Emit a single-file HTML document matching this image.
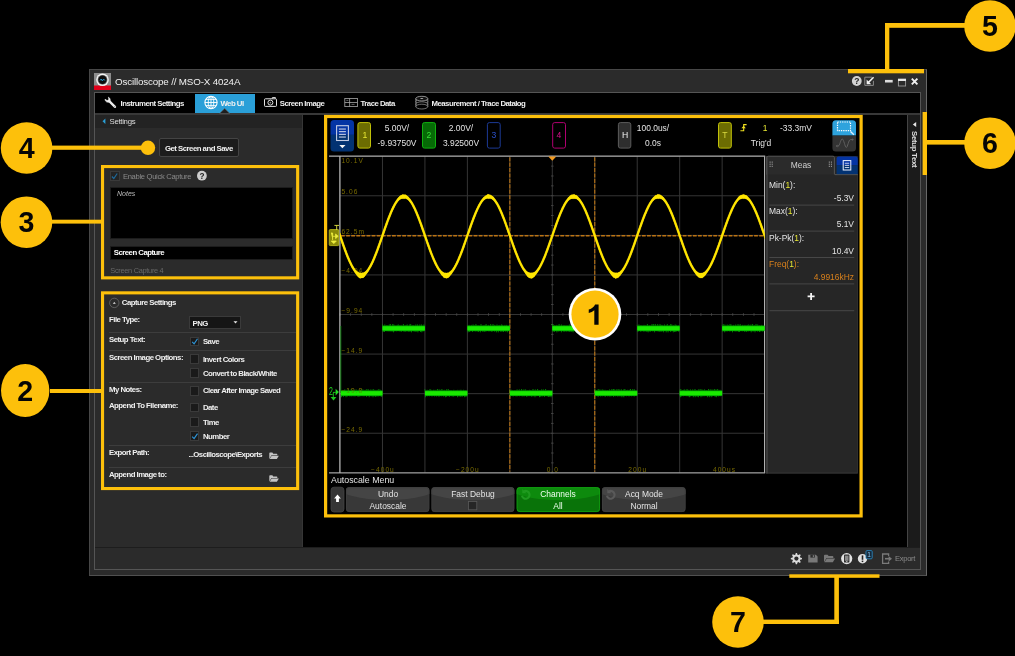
<!DOCTYPE html>
<html><head><meta charset="utf-8"><title>Oscilloscope Web UI</title>
<style>
html,body{margin:0;padding:0;background:#000;}
body{width:1015px;height:656px;position:relative;overflow:hidden;font-family:"Liberation Sans",sans-serif;}
.t{position:absolute;white-space:nowrap;line-height:1;font-family:"Liberation Sans",sans-serif;color:#f0f0f0;}
.b{font-weight:bold;letter-spacing:-0.52px;}
.r{letter-spacing:-0.3px;}
.g{color:#8a8a8a;}
.sc{color:#e0e0e0;}
.cb{position:absolute;width:9.6px;height:9.6px;background:#1a1a1a;border:1px solid #3a3a3a;box-sizing:border-box;}
.sep{position:absolute;height:1px;background:#3d3d3d;left:109px;width:187px;}
svg{position:absolute;left:0;top:0;overflow:visible;}
</style></head><body><div id="root" style="position:absolute;left:0;top:0;width:1015px;height:656px;will-change:transform;">
<div style="position:absolute;left:89px;top:69px;width:838px;height:507px;background:#2b2b2b;border:1px solid #474747;border-right-color:#686868;border-bottom-color:#505050;box-sizing:border-box;"></div>
<div style="position:absolute;left:94px;top:92px;width:827px;height:478px;background:#000;border:1px solid #555;box-sizing:border-box;"></div>
<div style="position:absolute;left:95px;top:113px;width:825px;height:2px;background:#383838;"></div>
<div style="position:absolute;left:95px;top:115px;width:207.6px;height:432px;background:#2b2b2b;border-right:1px solid #363636;box-sizing:border-box;"></div>
<div style="position:absolute;left:95px;top:115px;width:207px;height:12.5px;background:#232323;"></div>
<div style="position:absolute;left:95px;top:547px;width:825px;height:22px;background:#2b2b2b;border-top:1px solid #1d1d1d;box-sizing:border-box;"></div>
<div style="position:absolute;left:907px;top:115px;width:13px;height:432px;background:#1b1b1b;border-left:1px solid #444;box-sizing:border-box;"></div>
<div class="t " style="left:115px;top:77.49px;font-size:9.8px;color:#f0f0f0;letter-spacing:-0.16px;">Oscilloscope // MSO-X 4024A</div>
<svg width="1015" height="656" viewBox="0 0 1015 656">
<rect x="94" y="73" width="17" height="13" fill="#8c8c8c"/>
<rect x="94" y="85.5" width="17" height="4.5" fill="#e2001a"/>
<circle cx="102.5" cy="79.8" r="6.3" fill="#f4f4f4"/>
<circle cx="102.5" cy="79.8" r="4.9" fill="#777"/>
<circle cx="102.5" cy="79.8" r="4.2" fill="#0c0c0c"/>
<path d="M100 80.5 l1.2 -1.5 l1.2 2 l1.2 -2 l1.2 1.5" stroke="#2a9fd8" stroke-width="0.9" fill="none"/>
</svg>
<div style="position:absolute;left:195px;top:94px;width:60px;height:19px;background:#2a9fd8;"></div>
<div class="t b" style="left:120.5px;top:99.57px;font-size:7.8px;">Instrument Settings</div>
<div class="t b" style="left:220.4px;top:99.57px;font-size:7.8px;">Web UI</div>
<div class="t b" style="left:279.8px;top:99.57px;font-size:7.8px;">Screen Image</div>
<div class="t b" style="left:360.5px;top:99.57px;font-size:7.8px;">Trace Data</div>
<div class="t b" style="left:431.5px;top:99.57px;font-size:7.8px;">Measurement / Trace Datalog</div>
<div class="t r" style="left:109.5px;top:117.87px;font-size:7.8px;color:#ddd;">Settings</div>
<div style="position:absolute;left:159px;top:138px;width:80px;height:19px;background:#1c1c1c;border:1px solid #444;border-radius:2px;box-sizing:border-box;"></div>
<div class="t b" style="left:165px;top:144.57px;font-size:7.8px;">Get Screen and Save</div>
<div class="cb" style="left:110px;top:171px;width:10px;height:10px;background:#242424;border-color:#3a3a3a"></div>
<div class="t r g" style="left:122.9px;top:172.66px;font-size:7.6px;">Enable Quick Capture</div>
<div style="position:absolute;left:110px;top:187px;width:183px;height:52px;background:#000;border:1px solid #1c1c1c;box-sizing:border-box;"></div>
<div class="t " style="left:117px;top:189.92px;font-size:7px;font-style:italic;color:#bbb;">Notes</div>
<div style="position:absolute;left:110px;top:245.5px;width:183px;height:14.5px;background:#000;border:1px solid #1c1c1c;box-sizing:border-box;"></div>
<div class="t b" style="left:113.8px;top:249.07px;font-size:7.8px;color:#fff;">Screen Capture</div>
<div class="t r" style="left:110.3px;top:267.24px;font-size:7.4px;color:#686868;">Screen Capture 4</div>
<div class="t b" style="left:121.8px;top:299.27px;font-size:7.8px;">Capture Settings</div>
<div class="t b" style="left:109px;top:316.07px;font-size:7.8px;">File Type:</div>
<div style="position:absolute;left:189px;top:316px;width:52px;height:13px;background:#151515;border:1px solid #3a3a3a;box-sizing:border-box;"></div>
<div class="t b" style="left:192.5px;top:319.57px;font-size:7.8px;letter-spacing:-0.5px">PNG</div>
<div class="sep" style="top:332px"></div>
<div class="t b" style="left:109px;top:336.27px;font-size:7.8px;">Setup Text:</div>
<div class="cb" style="left:189.5px;top:336.5px"></div>
<div class="t b" style="left:202.9px;top:338.07px;font-size:7.8px;">Save</div>
<div class="sep" style="top:350px"></div>
<div class="t b" style="left:109px;top:354.07px;font-size:7.8px;">Screen Image Options:</div>
<div class="cb" style="left:189.5px;top:354px"></div>
<div class="t b" style="left:202.9px;top:355.57px;font-size:7.8px;">Invert Colors</div>
<div class="cb" style="left:189.5px;top:368.3px"></div>
<div class="t b" style="left:202.9px;top:369.87px;font-size:7.8px;">Convert to Black/White</div>
<div class="sep" style="top:381.5px"></div>
<div class="t b" style="left:109px;top:385.57px;font-size:7.8px;">My Notes:</div>
<div class="cb" style="left:189.5px;top:386px"></div>
<div class="t b" style="left:202.9px;top:387.27px;font-size:7.8px;">Clear After Image Saved</div>
<div class="t b" style="left:109px;top:402.07px;font-size:7.8px;">Append To Filename:</div>
<div class="cb" style="left:189.5px;top:402.7px"></div>
<div class="t b" style="left:202.9px;top:404.27px;font-size:7.8px;">Date</div>
<div class="cb" style="left:189.5px;top:417px"></div>
<div class="t b" style="left:202.9px;top:418.57px;font-size:7.8px;">Time</div>
<div class="cb" style="left:189.5px;top:431.3px"></div>
<div class="t b" style="left:202.9px;top:432.77px;font-size:7.8px;">Number</div>
<div class="sep" style="top:444.5px"></div>
<div class="t b" style="left:109px;top:448.57px;font-size:7.8px;">Export Path:</div>
<div class="t b" style="left:188.5px;top:451.27px;font-size:7.8px;letter-spacing:-0.55px">...Oscilloscope\Exports</div>
<div class="sep" style="top:467.3px"></div>
<div class="t b" style="left:109px;top:471.27px;font-size:7.8px;">Append Image to:</div>
<div class="t r" style="left:895px;top:555.36px;font-size:7.6px;color:#8a8a8a;">Export</div>
<div class="t b" style="left:914.3px;top:130.8px;font-size:7.8px;letter-spacing:-0.3px;transform-origin:0 0;transform:rotate(90deg) translateY(-50%);color:#ddd;">Setup Text</div>
<svg width="1015" height="656" viewBox="0 0 1015 656" style="z-index:5">
<g transform="translate(104.4 97)"><path d="M4.6 3.9 L10.6 9.9" stroke="#ececec" stroke-width="2.3" stroke-linecap="round"/><path d="M0.6 2.2 a3 3 0 0 0 4.6 2.6 a3 3 0 0 0 -1.2 -4.6 l0.5 2.2 l-1.7 1.2 z" fill="#ececec" stroke="#ececec" stroke-width="0.6" stroke-linejoin="round"/><circle cx="10.4" cy="9.7" r="0.5" fill="#555"/></g>
<path d="M219.6 113.5 L224.7 108.6 L229.8 113.5 z" fill="#1e1e1e" stroke="#5a5a5a" stroke-width="0.7"/>
<circle cx="211" cy="102.5" r="6.1" fill="#2a9fd6" stroke="#fff" stroke-width="1.1"/>
<ellipse cx="211" cy="102.5" rx="2.8" ry="6.1" fill="none" stroke="#fff" stroke-width="0.9"/>
<path d="M211 96.4 v12.2 M204.9 102.5 h12.2 M205.8 99.4 h10.4 M205.8 105.6 h10.4" stroke="#fff" stroke-width="0.9" fill="none"/>
<rect x="264.5" y="98.8" width="12" height="7.6" rx="0.8" fill="none" stroke="#e4e4e4" stroke-width="1"/><circle cx="270.4" cy="102.6" r="2.5" fill="none" stroke="#e4e4e4" stroke-width="1"/><circle cx="270.4" cy="102.6" r="0.9" fill="#8a8a8a"/><path d="M272.4 98.6 v-1.1 h3 v1.1" fill="none" stroke="#e4e4e4" stroke-width="0.9"/>
<rect x="344.8" y="98.4" width="12.6" height="8.2" fill="none" stroke="#a8a8a8" stroke-width="0.8"/><path d="M344.8 102.5 h12.6 M349.6 98.4 v8.2" stroke="#a8a8a8" stroke-width="0.8"/><path d="M346.3 100.4 h2 M351.5 104.4 h3" stroke="#8a8a8a" stroke-width="0.7"/>
<ellipse cx="421.8" cy="99" rx="6" ry="2.4" fill="#000" stroke="#8c8c8c" stroke-width="0.8"/>
<ellipse cx="421.8" cy="101.6" rx="6" ry="2.4" fill="#000" stroke="#8c8c8c" stroke-width="0.8"/>
<ellipse cx="421.8" cy="104.2" rx="6" ry="2.4" fill="#000" stroke="#8c8c8c" stroke-width="0.8"/>
<ellipse cx="421.8" cy="106.6" rx="6" ry="2.4" fill="#000" stroke="#8c8c8c" stroke-width="0.8"/>
<ellipse cx="421.8" cy="98.6" rx="6" ry="2.3" fill="#111" stroke="#a0a0a0" stroke-width="0.8"/><ellipse cx="421.8" cy="98.5" rx="1.6" ry="0.6" fill="#aaa"/>
<path d="M415.8 98.8 v8 M427.8 98.8 v8" stroke="#8c8c8c" stroke-width="0.8"/>
<circle cx="856.8" cy="81" r="4.9" fill="#d2d2d2"/><text x="856.8" y="84.06" text-anchor="middle" font-family="Liberation Sans, sans-serif" font-weight="bold" font-size="8.5" fill="#222">?</text>
<path d="M872 77.2 h-7.2 v8.2 h8.6 v-4.6" fill="none" stroke="#8a8a8a" stroke-width="1"/><path d="M873.6 77.2 l-5.4 5.4" stroke="#f0f0f0" stroke-width="1.5"/><path d="M866.6 79.6 v4.6 h4.6 z" fill="#f0f0f0"/>
<rect x="885" y="79.9" width="7.7" height="2.6" fill="#dcdcdc"/>
<rect x="898.4" y="79.2" width="7.2" height="6.8" fill="none" stroke="#9a9a9a" stroke-width="0.9"/><rect x="898" y="78.8" width="8" height="2.2" fill="#e6e6e6"/>
<path d="M911.8 78.6 l5.6 5.8 M917.4 78.6 l-5.6 5.8" stroke="#efefef" stroke-width="1.9"/>
<path d="M105.4 118.5 v5.4 l-2.9 -2.7 z" fill="#2a9fd6"/>
<circle cx="201.9" cy="175.7" r="4.9" fill="#cdcdcd"/><text x="201.9" y="178.65" text-anchor="middle" font-family="Liberation Sans, sans-serif" font-weight="bold" font-size="8.2" fill="#222">?</text>
<path d="M111.9 176.5 l1.9 2 l3.4 -5" fill="none" stroke="#1e6a9c" stroke-width="1.15"/>
<path d="M192.2 341.8 l1.9 2 l3.4 -5" fill="none" stroke="#2d95d8" stroke-width="1.15"/>
<path d="M192.2 436.59999999999997 l1.9 2 l3.4 -5" fill="none" stroke="#2d95d8" stroke-width="1.15"/>
<circle cx="114.3" cy="302.9" r="4.7" fill="none" stroke="#6a6a6a" stroke-width="0.8"/><path d="M112.8 303.8 h3 l-1.5 -1.8 z" fill="#e8e8e8"/>
<path d="M233.5 321.2 h4 l-2 2.2 z" fill="#e8e8e8"/>
<g transform="translate(269.3 452.6) scale(0.9)"><path d="M0 7 V0.8 q0 -0.8 0.8 -0.8 h2.6 l1 1.2 h3.8 q0.7 0 0.7 0.8 v1 H2.4 z" fill="#c4c4c4"/><path d="M0.4 7.2 L2.6 3.6 h8 l-2.2 3.6 z" fill="#c4c4c4"/></g>
<g transform="translate(269.3 475.3) scale(0.9)"><path d="M0 7 V0.8 q0 -0.8 0.8 -0.8 h2.6 l1 1.2 h3.8 q0.7 0 0.7 0.8 v1 H2.4 z" fill="#c4c4c4"/><path d="M0.4 7.2 L2.6 3.6 h8 l-2.2 3.6 z" fill="#c4c4c4"/></g>
<path d="M801.97 557.99 L801.97 559.21 L800.24 559.72 L799.91 560.53 L800.77 562.10 L799.90 562.97 L798.33 562.11 L797.52 562.44 L797.01 564.17 L795.79 564.17 L795.28 562.44 L794.47 562.11 L792.90 562.97 L792.03 562.10 L792.89 560.53 L792.56 559.72 L790.83 559.21 L790.83 557.99 L792.56 557.48 L792.89 556.67 L792.03 555.10 L792.90 554.23 L794.47 555.09 L795.28 554.76 L795.79 553.03 L797.01 553.03 L797.52 554.76 L798.33 555.09 L799.90 554.23 L800.77 555.10 L799.91 556.67 L800.24 557.48 z" fill="#dadada"/><circle cx="796.4" cy="558.6" r="2.1" fill="#2b2b2b"/>
<path d="M808.2 554.8 h7.6 l1.8 1.8 v5.8 h-9.4 z" fill="#787878"/><rect x="810.4" y="554.8" width="4.4" height="2.8" fill="#2b2b2b"/><rect x="812.8" y="555.2" width="1.2" height="2" fill="#787878"/>
<g transform="translate(824 554.8) scale(1.05)"><path d="M0 7 V0.8 q0 -0.8 0.8 -0.8 h2.6 l1 1.2 h3.8 q0.7 0 0.7 0.8 v1 H2.4 z" fill="#787878"/><path d="M0.4 7.2 L2.6 3.6 h8 l-2.2 3.6 z" fill="#787878"/></g>
<circle cx="846.7" cy="558.6" r="5.6" fill="#e2e2e2"/><rect x="844" y="554.6" width="5.4" height="8" rx="0.9" fill="#2b2b2b"/><rect x="844.9" y="555.6" width="3.6" height="5.2" fill="#8a8a8a"/><rect x="845.9" y="561.3" width="1.6" height="0.7" fill="#ddd"/>
<circle cx="862.5" cy="558.7" r="4.7" fill="#e2e2e2"/><rect x="861.7" y="555.4" width="1.6" height="4.4" fill="#222"/><rect x="861.7" y="560.6" width="1.6" height="1.5" fill="#222"/>
<rect x="866" y="550.6" width="6.2" height="8.2" rx="1" fill="#15283a" stroke="#2a86bc" stroke-width="0.9"/><text x="869.1" y="557.2" text-anchor="middle" font-family="Liberation Sans, sans-serif" font-size="6.5" fill="#8cc8f0">1</text>
<path d="M888.6 556 v-2 h-6 v9.4 h6 v-2" fill="none" stroke="#7a7a7a" stroke-width="1.3"/><path d="M885 558.7 h4.2" stroke="#7a7a7a" stroke-width="1.6"/><path d="M888.6 556 l3.4 2.7 l-3.4 2.7 z" fill="#7a7a7a"/>
<path d="M916.2 121.9 v5 l-3.4 -2.5 z" fill="#e6e6e6"/>
</svg>
<svg width="1015" height="656" viewBox="0 0 1015 656">
<rect x="327" y="117.5" width="533.5" height="397" fill="#000"/>
<defs><clipPath id="cm"><rect x="330.5" y="120" width="23.5" height="31.6" rx="3.5"/></clipPath><clipPath id="cr"><rect x="832.4" y="120.3" width="23.6" height="31.3" rx="3.5"/></clipPath></defs>
<g clip-path="url(#cm)"><rect x="330" y="119" width="25" height="15.9" fill="#0434a4"/><rect x="330" y="134.9" width="25" height="17.5" fill="#023272"/></g>
<rect x="336.6" y="125.7" width="11.8" height="14.8" fill="none" stroke="#c4cce4" stroke-width="1.1"/>
<rect x="338.9" y="128.5" width="7" height="1.1" fill="#c8d0e8"/>
<rect x="338.9" y="131.1" width="7" height="1.1" fill="#c8d0e8"/>
<rect x="338.9" y="133.8" width="7" height="1.1" fill="#c8d0e8"/>
<rect x="338.9" y="136.5" width="7" height="1.1" fill="#c8d0e8"/>
<path d="M339.3 145 h6.2 l-3.1 3.3 z" fill="#f4f4f4"/>
<rect x="357.9" y="122.6" width="12.600000000000023" height="25.5" rx="2" fill="#6c6c02" stroke="#c0c008" stroke-width="1"/>
<rect x="422.5" y="122.6" width="13.0" height="25.5" rx="2" fill="#066a06" stroke="#10b010" stroke-width="1"/>
<rect x="487.4" y="122.6" width="12.800000000000011" height="25.5" rx="2" fill="#000" stroke="#1c3a96" stroke-width="1"/>
<rect x="552.6999999999999" y="122.6" width="12.800000000000068" height="25.5" rx="2" fill="#000" stroke="#b00070" stroke-width="1"/>
<rect x="618.4" y="122.6" width="12.399999999999977" height="25.5" rx="2" fill="#2e2e2e" stroke="#5c5c5c" stroke-width="1"/>
<rect x="718.5" y="122.6" width="12.799999999999955" height="25.5" rx="2" fill="#6c6c02" stroke="#c0c008" stroke-width="1"/>
<path d="M740.4 130.8 h3.3 v-6.2 h2.9" fill="none" stroke="#f0e020" stroke-width="1.1"/><path d="M741.4 128.3 h4.4 l-2.2 -2.6 z" fill="#f0e020"/>
<g clip-path="url(#cr)"><rect x="832" y="120" width="25" height="15.6" fill="#2ea3dd"/><rect x="832" y="135.6" width="25" height="17" fill="#333"/></g>
<rect x="837.5" y="122" width="13" height="8.6" fill="none" stroke="#fff" stroke-width="1.2" stroke-dasharray="1.3 1"/>
<path d="M850.5 131.5 l3.4 3.2" stroke="#dfefff" stroke-width="1.4"/>
<path d="M838 146 C840 146 840.6 139 842.2 139 S845 147.5 846.3 147.5 S848.6 139.6 850.4 139.6 M850.4 139.6 h2.6 M836.6 146 h2" fill="none" stroke="#606060" stroke-width="1"/><path d="M852.2 138.2 l1.6 1.4 l-1.6 1.4 z M837.4 144.6 l-1.6 1.4 l1.6 1.4 z" fill="#606060"/>
<rect x="381.96" y="156.2" width="1" height="316.6" fill="#353535"/>
<rect x="424.42" y="156.2" width="1" height="316.6" fill="#353535"/>
<rect x="466.88" y="156.2" width="1" height="316.6" fill="#353535"/>
<rect x="509.34" y="156.2" width="1" height="316.6" fill="#353535"/>
<rect x="551.80" y="156.2" width="1" height="316.6" fill="#353535"/>
<rect x="594.26" y="156.2" width="1" height="316.6" fill="#353535"/>
<rect x="636.72" y="156.2" width="1" height="316.6" fill="#353535"/>
<rect x="679.18" y="156.2" width="1" height="316.6" fill="#353535"/>
<rect x="721.64" y="156.2" width="1" height="316.6" fill="#353535"/>
<rect x="340.0" y="195.27" width="424.6" height="1" fill="#353535"/>
<rect x="340.0" y="234.85" width="424.6" height="1" fill="#353535"/>
<rect x="340.0" y="274.43" width="424.6" height="1" fill="#353535"/>
<rect x="340.0" y="314.00" width="424.6" height="1" fill="#353535"/>
<rect x="340.0" y="353.57" width="424.6" height="1" fill="#353535"/>
<rect x="340.0" y="393.15" width="424.6" height="1" fill="#353535"/>
<rect x="340.0" y="432.73" width="424.6" height="1" fill="#353535"/>
<rect x="339.60" y="313.20" width="0.8" height="2.6" fill="#4a4a4a"/>
<rect x="350.22" y="313.20" width="0.8" height="2.6" fill="#4a4a4a"/>
<rect x="360.83" y="313.20" width="0.8" height="2.6" fill="#4a4a4a"/>
<rect x="371.45" y="313.20" width="0.8" height="2.6" fill="#4a4a4a"/>
<rect x="382.06" y="313.20" width="0.8" height="2.6" fill="#4a4a4a"/>
<rect x="392.68" y="313.20" width="0.8" height="2.6" fill="#4a4a4a"/>
<rect x="403.29" y="313.20" width="0.8" height="2.6" fill="#4a4a4a"/>
<rect x="413.91" y="313.20" width="0.8" height="2.6" fill="#4a4a4a"/>
<rect x="424.52" y="313.20" width="0.8" height="2.6" fill="#4a4a4a"/>
<rect x="435.13" y="313.20" width="0.8" height="2.6" fill="#4a4a4a"/>
<rect x="445.75" y="313.20" width="0.8" height="2.6" fill="#4a4a4a"/>
<rect x="456.37" y="313.20" width="0.8" height="2.6" fill="#4a4a4a"/>
<rect x="466.98" y="313.20" width="0.8" height="2.6" fill="#4a4a4a"/>
<rect x="477.60" y="313.20" width="0.8" height="2.6" fill="#4a4a4a"/>
<rect x="488.21" y="313.20" width="0.8" height="2.6" fill="#4a4a4a"/>
<rect x="498.83" y="313.20" width="0.8" height="2.6" fill="#4a4a4a"/>
<rect x="509.44" y="313.20" width="0.8" height="2.6" fill="#4a4a4a"/>
<rect x="520.06" y="313.20" width="0.8" height="2.6" fill="#4a4a4a"/>
<rect x="530.67" y="313.20" width="0.8" height="2.6" fill="#4a4a4a"/>
<rect x="541.28" y="313.20" width="0.8" height="2.6" fill="#4a4a4a"/>
<rect x="551.90" y="313.20" width="0.8" height="2.6" fill="#4a4a4a"/>
<rect x="562.51" y="313.20" width="0.8" height="2.6" fill="#4a4a4a"/>
<rect x="573.13" y="313.20" width="0.8" height="2.6" fill="#4a4a4a"/>
<rect x="583.75" y="313.20" width="0.8" height="2.6" fill="#4a4a4a"/>
<rect x="594.36" y="313.20" width="0.8" height="2.6" fill="#4a4a4a"/>
<rect x="604.98" y="313.20" width="0.8" height="2.6" fill="#4a4a4a"/>
<rect x="615.59" y="313.20" width="0.8" height="2.6" fill="#4a4a4a"/>
<rect x="626.21" y="313.20" width="0.8" height="2.6" fill="#4a4a4a"/>
<rect x="636.82" y="313.20" width="0.8" height="2.6" fill="#4a4a4a"/>
<rect x="647.44" y="313.20" width="0.8" height="2.6" fill="#4a4a4a"/>
<rect x="658.05" y="313.20" width="0.8" height="2.6" fill="#4a4a4a"/>
<rect x="668.67" y="313.20" width="0.8" height="2.6" fill="#4a4a4a"/>
<rect x="679.28" y="313.20" width="0.8" height="2.6" fill="#4a4a4a"/>
<rect x="689.90" y="313.20" width="0.8" height="2.6" fill="#4a4a4a"/>
<rect x="700.51" y="313.20" width="0.8" height="2.6" fill="#4a4a4a"/>
<rect x="711.13" y="313.20" width="0.8" height="2.6" fill="#4a4a4a"/>
<rect x="721.74" y="313.20" width="0.8" height="2.6" fill="#4a4a4a"/>
<rect x="732.36" y="313.20" width="0.8" height="2.6" fill="#4a4a4a"/>
<rect x="742.97" y="313.20" width="0.8" height="2.6" fill="#4a4a4a"/>
<rect x="753.59" y="313.20" width="0.8" height="2.6" fill="#4a4a4a"/>
<rect x="764.20" y="313.20" width="0.8" height="2.6" fill="#4a4a4a"/>
<rect x="551.00" y="155.80" width="2.6" height="0.8" fill="#4a4a4a"/>
<rect x="551.00" y="165.69" width="2.6" height="0.8" fill="#4a4a4a"/>
<rect x="551.00" y="175.59" width="2.6" height="0.8" fill="#4a4a4a"/>
<rect x="551.00" y="185.48" width="2.6" height="0.8" fill="#4a4a4a"/>
<rect x="551.00" y="195.37" width="2.6" height="0.8" fill="#4a4a4a"/>
<rect x="551.00" y="205.27" width="2.6" height="0.8" fill="#4a4a4a"/>
<rect x="551.00" y="215.16" width="2.6" height="0.8" fill="#4a4a4a"/>
<rect x="551.00" y="225.06" width="2.6" height="0.8" fill="#4a4a4a"/>
<rect x="551.00" y="234.95" width="2.6" height="0.8" fill="#4a4a4a"/>
<rect x="551.00" y="244.84" width="2.6" height="0.8" fill="#4a4a4a"/>
<rect x="551.00" y="254.74" width="2.6" height="0.8" fill="#4a4a4a"/>
<rect x="551.00" y="264.63" width="2.6" height="0.8" fill="#4a4a4a"/>
<rect x="551.00" y="274.53" width="2.6" height="0.8" fill="#4a4a4a"/>
<rect x="551.00" y="284.42" width="2.6" height="0.8" fill="#4a4a4a"/>
<rect x="551.00" y="294.31" width="2.6" height="0.8" fill="#4a4a4a"/>
<rect x="551.00" y="304.21" width="2.6" height="0.8" fill="#4a4a4a"/>
<rect x="551.00" y="314.10" width="2.6" height="0.8" fill="#4a4a4a"/>
<rect x="551.00" y="323.99" width="2.6" height="0.8" fill="#4a4a4a"/>
<rect x="551.00" y="333.89" width="2.6" height="0.8" fill="#4a4a4a"/>
<rect x="551.00" y="343.78" width="2.6" height="0.8" fill="#4a4a4a"/>
<rect x="551.00" y="353.68" width="2.6" height="0.8" fill="#4a4a4a"/>
<rect x="551.00" y="363.57" width="2.6" height="0.8" fill="#4a4a4a"/>
<rect x="551.00" y="373.46" width="2.6" height="0.8" fill="#4a4a4a"/>
<rect x="551.00" y="383.36" width="2.6" height="0.8" fill="#4a4a4a"/>
<rect x="551.00" y="393.25" width="2.6" height="0.8" fill="#4a4a4a"/>
<rect x="551.00" y="403.14" width="2.6" height="0.8" fill="#4a4a4a"/>
<rect x="551.00" y="413.04" width="2.6" height="0.8" fill="#4a4a4a"/>
<rect x="551.00" y="422.93" width="2.6" height="0.8" fill="#4a4a4a"/>
<rect x="551.00" y="432.83" width="2.6" height="0.8" fill="#4a4a4a"/>
<rect x="551.00" y="442.72" width="2.6" height="0.8" fill="#4a4a4a"/>
<rect x="551.00" y="452.61" width="2.6" height="0.8" fill="#4a4a4a"/>
<rect x="551.00" y="462.51" width="2.6" height="0.8" fill="#4a4a4a"/>
<rect x="551.00" y="472.40" width="2.6" height="0.8" fill="#4a4a4a"/>
<rect x="329" y="155.5" width="436.20000000000005" height="1.3" fill="#a8a8a8"/>
<rect x="329" y="472.2" width="436.20000000000005" height="1.3" fill="#9a9a9a"/>
<rect x="339.3" y="156.2" width="1.2" height="316.6" fill="#c4c4c4"/>
<rect x="764.0" y="156.2" width="1.2" height="316.6" fill="#b0b0b0"/>
<line x1="509.84" y1="157.2" x2="509.84" y2="471.8" stroke="#bc7414" stroke-width="1.1" stroke-dasharray="4.2 1.2"/>
<line x1="594.76" y1="157.2" x2="594.76" y2="471.8" stroke="#bc7414" stroke-width="1.1" stroke-dasharray="4.2 1.2"/>
<line x1="341.0" y1="235.75" x2="763.6" y2="235.75" stroke="#bc7414" stroke-width="1.4" stroke-dasharray="3.8 1.3"/>
<path d="M548.30 156.39999999999998 h8 l-4 4.3 z" fill="#f39a1e"/>
<text x="341.40" y="162.55" text-anchor="start" font-family="Liberation Sans, sans-serif" font-size="6.6" letter-spacing="1.05" fill="#7a6c00">10.1V</text>
<text x="341.40" y="194.02" text-anchor="start" font-family="Liberation Sans, sans-serif" font-size="6.6" letter-spacing="1.05" fill="#7a6c00">5.06</text>
<text x="341.40" y="233.70" text-anchor="start" font-family="Liberation Sans, sans-serif" font-size="6.6" letter-spacing="1.05" fill="#7a6c00">62.5m</text>
<text x="341.40" y="273.38" text-anchor="start" font-family="Liberation Sans, sans-serif" font-size="6.6" letter-spacing="1.05" fill="#7a6c00">−4.94</text>
<text x="341.40" y="313.25" text-anchor="start" font-family="Liberation Sans, sans-serif" font-size="6.6" letter-spacing="1.05" fill="#7a6c00">−9.94</text>
<text x="341.40" y="353.43" text-anchor="start" font-family="Liberation Sans, sans-serif" font-size="6.6" letter-spacing="1.05" fill="#7a6c00">−14.9</text>
<text x="341.40" y="393.30" text-anchor="start" font-family="Liberation Sans, sans-serif" font-size="6.6" letter-spacing="1.05" fill="#7a6c00">−19.8</text>
<text x="341.40" y="432.28" text-anchor="start" font-family="Liberation Sans, sans-serif" font-size="6.6" letter-spacing="1.05" fill="#7a6c00">−24.9</text>
<text x="382.96" y="471.65" text-anchor="middle" font-family="Liberation Sans, sans-serif" font-size="6.6" letter-spacing="1.05" fill="#7a6c00">−400u</text>
<text x="467.88" y="471.65" text-anchor="middle" font-family="Liberation Sans, sans-serif" font-size="6.6" letter-spacing="1.05" fill="#7a6c00">−200u</text>
<text x="552.80" y="471.65" text-anchor="middle" font-family="Liberation Sans, sans-serif" font-size="6.6" letter-spacing="1.05" fill="#7a6c00">0.0</text>
<text x="637.72" y="471.65" text-anchor="middle" font-family="Liberation Sans, sans-serif" font-size="6.6" letter-spacing="1.05" fill="#7a6c00">200u</text>
<text x="724.54" y="471.65" text-anchor="middle" font-family="Liberation Sans, sans-serif" font-size="6.6" letter-spacing="1.05" fill="#7a6c00">400us</text>
<rect x="340.3" y="326" width="1" height="67" fill="#0a8c0a" opacity="0.8"/>
<rect x="340.80" y="390.40" width="41.66" height="5.6" fill="#00a800"/>
<rect x="340.80" y="391.20" width="41.66" height="4.0" fill="#1aea00"/>
<path d="M340.8 390.1v0.3 M343.1 390.1v0.3 M344.8 389.4v1.0 M345.9 390.1v0.3 M348.2 389.4v1.0 M349.3 390.1v0.3 M351.0 389.4v1.0 M352.1 389.8v0.6 M354.4 390.1v0.3 M356.1 389.4v1.0 M358.4 389.8v0.6 M360.7 389.8v0.6 M361.8 389.8v0.6 M362.9 389.4v1.0 M365.2 389.8v0.6 M366.9 389.0v1.4 M368.6 389.4v1.0 M370.9 389.4v1.0 M373.2 389.0v1.4 M374.9 389.8v0.6 M377.2 389.8v0.6 M378.9 389.0v1.4 M380.6 389.8v0.6 M341.5 396.0v1.2 M343.4 396.0v0.9 M346.0 396.0v1.2 M347.3 396.0v0.5 M349.9 396.0v0.5 M351.8 396.0v0.5 M353.7 396.0v0.3 M355.0 396.0v0.5 M357.6 396.0v0.5 M358.9 396.0v0.9 M360.2 396.0v0.3 M362.1 396.0v0.3 M364.0 396.0v0.5 M366.6 396.0v0.9 M369.2 396.0v1.2 M371.1 396.0v0.5 M373.0 396.0v1.2 M374.3 396.0v0.3 M375.6 396.0v0.9 M376.9 396.0v0.5 M378.2 396.0v0.5 M380.1 396.0v0.3 M381.4 396.0v0.9" stroke="#00b400" stroke-width="0.8" fill="none"/>
<rect x="382.46" y="325.50" width="42.46" height="5.6" fill="#00a800"/>
<rect x="382.46" y="326.30" width="42.46" height="4.0" fill="#1aea00"/>
<path d="M382.5 324.5v1.0 M384.8 324.5v1.0 M386.5 325.2v0.3 M387.6 325.2v0.3 M389.3 324.5v1.0 M390.4 324.1v1.4 M392.7 324.1v1.4 M393.8 324.5v1.0 M394.9 325.2v0.3 M397.2 324.9v0.6 M398.3 324.5v1.0 M399.4 325.2v0.3 M401.1 324.9v0.6 M403.4 324.1v1.4 M405.1 325.2v0.3 M406.2 324.9v0.6 M407.3 324.5v1.0 M409.6 324.5v1.0 M410.7 324.1v1.4 M412.4 325.2v0.3 M413.5 325.2v0.3 M415.8 324.5v1.0 M417.5 324.5v1.0 M419.8 324.5v1.0 M421.5 324.5v1.0 M423.8 324.5v1.0 M383.2 331.1v0.9 M384.5 331.1v0.9 M387.1 331.1v0.3 M389.0 331.1v0.5 M390.9 331.1v0.5 M392.2 331.1v0.5 M393.5 331.1v1.2 M394.8 331.1v0.3 M396.7 331.1v0.3 M399.3 331.1v0.3 M401.2 331.1v0.9 M403.8 331.1v0.5 M405.1 331.1v0.9 M407.0 331.1v0.5 M408.9 331.1v0.9 M410.2 331.1v0.5 M411.5 331.1v1.2 M413.4 331.1v0.3 M414.7 331.1v0.5 M416.0 331.1v0.9 M417.9 331.1v1.2 M420.5 331.1v0.9 M421.8 331.1v1.2 M423.1 331.1v0.3" stroke="#00b400" stroke-width="0.8" fill="none"/>
<rect x="424.92" y="390.40" width="42.46" height="5.6" fill="#00a800"/>
<rect x="424.92" y="391.20" width="42.46" height="4.0" fill="#1aea00"/>
<path d="M424.9 389.4v1.0 M427.2 389.8v0.6 M428.3 390.1v0.3 M430.0 389.0v1.4 M431.1 389.8v0.6 M433.4 389.8v0.6 M435.1 389.8v0.6 M437.4 389.0v1.4 M439.1 389.4v1.0 M440.2 389.8v0.6 M441.9 389.0v1.4 M444.2 389.8v0.6 M446.5 389.4v1.0 M448.2 389.0v1.4 M449.3 390.1v0.3 M450.4 390.1v0.3 M451.5 390.1v0.3 M453.8 389.8v0.6 M456.1 390.1v0.3 M457.8 389.8v0.6 M460.1 389.8v0.6 M461.2 389.8v0.6 M463.5 389.8v0.6 M465.2 390.1v0.3 M425.6 396.0v1.2 M427.5 396.0v0.3 M429.4 396.0v0.3 M432.0 396.0v0.5 M434.6 396.0v0.5 M436.5 396.0v0.5 M438.4 396.0v0.5 M439.7 396.0v0.5 M441.6 396.0v0.3 M443.5 396.0v0.5 M445.4 396.0v1.2 M446.7 396.0v0.9 M449.3 396.0v0.9 M451.2 396.0v0.3 M453.1 396.0v0.9 M455.0 396.0v0.3 M457.6 396.0v1.2 M458.9 396.0v0.3 M460.2 396.0v0.9 M462.1 396.0v0.9 M464.7 396.0v1.2 M466.0 396.0v0.9" stroke="#00b400" stroke-width="0.8" fill="none"/>
<rect x="467.38" y="325.50" width="42.46" height="5.6" fill="#00a800"/>
<rect x="467.38" y="326.30" width="42.46" height="4.0" fill="#1aea00"/>
<path d="M467.4 325.2v0.3 M469.1 324.9v0.6 M471.4 324.9v0.6 M473.1 324.5v1.0 M474.2 325.2v0.3 M475.9 324.1v1.4 M477.0 325.2v0.3 M478.7 325.2v0.3 M481.0 324.1v1.4 M483.3 325.2v0.3 M485.0 324.9v0.6 M486.1 324.1v1.4 M488.4 324.9v0.6 M490.7 324.1v1.4 M493.0 324.1v1.4 M494.7 324.9v0.6 M497.0 324.5v1.0 M498.7 325.2v0.3 M499.8 324.9v0.6 M501.5 324.5v1.0 M502.6 324.9v0.6 M504.9 324.9v0.6 M506.6 324.9v0.6 M468.1 331.1v1.2 M469.4 331.1v0.9 M470.7 331.1v0.3 M472.6 331.1v0.9 M475.2 331.1v0.5 M477.1 331.1v0.5 M478.4 331.1v0.9 M480.3 331.1v1.2 M482.9 331.1v0.9 M484.8 331.1v0.9 M486.1 331.1v0.3 M488.7 331.1v0.3 M490.0 331.1v0.3 M491.9 331.1v0.9 M494.5 331.1v0.5 M496.4 331.1v1.2 M498.3 331.1v1.2 M500.9 331.1v0.9 M502.2 331.1v0.5 M503.5 331.1v0.9 M505.4 331.1v0.5 M507.3 331.1v1.2" stroke="#00b400" stroke-width="0.8" fill="none"/>
<rect x="509.84" y="390.40" width="42.46" height="5.6" fill="#00a800"/>
<rect x="509.84" y="391.20" width="42.46" height="4.0" fill="#1aea00"/>
<path d="M509.8 389.8v0.6 M511.5 389.8v0.6 M512.6 390.1v0.3 M514.3 390.1v0.3 M516.0 390.1v0.3 M517.1 389.4v1.0 M518.2 390.1v0.3 M519.3 389.4v1.0 M521.6 389.0v1.4 M523.9 389.4v1.0 M525.6 389.4v1.0 M527.9 390.1v0.3 M529.6 389.8v0.6 M530.7 390.1v0.3 M533.0 389.0v1.4 M535.3 389.4v1.0 M537.6 389.0v1.4 M539.3 390.1v0.3 M541.6 389.4v1.0 M543.3 389.4v1.0 M545.6 389.0v1.4 M547.9 390.1v0.3 M549.0 390.1v0.3 M510.5 396.0v0.5 M513.1 396.0v0.5 M515.7 396.0v0.3 M517.0 396.0v0.5 M519.6 396.0v0.3 M522.2 396.0v0.5 M524.1 396.0v0.5 M526.7 396.0v0.9 M528.0 396.0v0.3 M529.9 396.0v0.3 M531.8 396.0v0.9 M533.7 396.0v0.3 M535.0 396.0v1.2 M536.9 396.0v0.3 M539.5 396.0v1.2 M540.8 396.0v0.9 M542.7 396.0v0.5 M544.6 396.0v0.9 M547.2 396.0v0.5 M548.5 396.0v0.9 M549.8 396.0v0.9 M551.1 396.0v1.2" stroke="#00b400" stroke-width="0.8" fill="none"/>
<rect x="552.30" y="325.50" width="42.46" height="5.6" fill="#00a800"/>
<rect x="552.30" y="326.30" width="42.46" height="4.0" fill="#1aea00"/>
<path d="M552.3 324.1v1.4 M553.4 325.2v0.3 M554.5 325.2v0.3 M556.8 324.9v0.6 M559.1 324.1v1.4 M561.4 324.5v1.0 M563.7 325.2v0.3 M564.8 325.2v0.3 M567.1 325.2v0.3 M569.4 324.5v1.0 M571.7 324.5v1.0 M574.0 324.5v1.0 M576.3 324.5v1.0 M578.6 324.5v1.0 M579.7 324.1v1.4 M580.8 324.1v1.4 M583.1 324.1v1.4 M584.2 324.5v1.0 M585.3 324.9v0.6 M586.4 324.5v1.0 M587.5 324.9v0.6 M589.2 325.2v0.3 M590.3 325.2v0.3 M592.0 324.5v1.0 M593.1 325.2v0.3 M553.0 331.1v0.5 M554.3 331.1v0.9 M556.9 331.1v1.2 M558.8 331.1v0.5 M561.4 331.1v1.2 M564.0 331.1v0.9 M565.3 331.1v0.3 M566.6 331.1v0.5 M567.9 331.1v0.3 M569.2 331.1v0.9 M570.5 331.1v0.5 M571.8 331.1v0.9 M573.1 331.1v1.2 M575.7 331.1v0.5 M578.3 331.1v0.5 M579.6 331.1v0.3 M580.9 331.1v0.5 M582.8 331.1v0.3 M584.7 331.1v0.3 M587.3 331.1v1.2 M589.2 331.1v0.9 M591.8 331.1v1.2 M593.1 331.1v0.5" stroke="#00b400" stroke-width="0.8" fill="none"/>
<rect x="594.76" y="390.40" width="42.46" height="5.6" fill="#00a800"/>
<rect x="594.76" y="391.20" width="42.46" height="4.0" fill="#1aea00"/>
<path d="M594.8 389.4v1.0 M596.5 390.1v0.3 M598.2 389.0v1.4 M599.9 389.4v1.0 M602.2 389.4v1.0 M603.3 389.8v0.6 M605.0 389.8v0.6 M607.3 390.1v0.3 M609.6 389.4v1.0 M611.9 389.0v1.4 M613.6 389.0v1.4 M614.7 389.4v1.0 M616.4 389.4v1.0 M618.1 389.0v1.4 M619.8 389.4v1.0 M621.5 389.4v1.0 M623.8 389.4v1.0 M624.9 389.0v1.4 M626.6 390.1v0.3 M627.7 389.8v0.6 M629.4 389.8v0.6 M630.5 389.0v1.4 M632.8 389.0v1.4 M634.5 389.4v1.0 M595.5 396.0v0.3 M598.1 396.0v0.9 M600.7 396.0v0.5 M602.6 396.0v0.3 M605.2 396.0v0.9 M607.8 396.0v0.5 M609.7 396.0v0.5 M611.0 396.0v0.5 M613.6 396.0v0.9 M615.5 396.0v0.3 M617.4 396.0v0.5 M618.7 396.0v0.3 M620.0 396.0v0.5 M621.9 396.0v1.2 M623.8 396.0v1.2 M626.4 396.0v0.3 M629.0 396.0v0.5 M631.6 396.0v0.3 M634.2 396.0v0.5" stroke="#00b400" stroke-width="0.8" fill="none"/>
<rect x="637.22" y="325.50" width="42.46" height="5.6" fill="#00a800"/>
<rect x="637.22" y="326.30" width="42.46" height="4.0" fill="#1aea00"/>
<path d="M637.2 324.9v0.6 M638.9 324.5v1.0 M640.6 325.2v0.3 M641.7 325.2v0.3 M644.0 324.9v0.6 M645.7 325.2v0.3 M647.4 324.1v1.4 M649.7 325.2v0.3 M652.0 324.1v1.4 M653.7 324.1v1.4 M655.4 324.1v1.4 M657.7 324.1v1.4 M660.0 324.1v1.4 M661.1 324.9v0.6 M662.2 324.9v0.6 M664.5 324.5v1.0 M666.2 325.2v0.3 M667.3 324.1v1.4 M669.6 325.2v0.3 M670.7 324.1v1.4 M671.8 324.5v1.0 M673.5 325.2v0.3 M675.2 324.5v1.0 M676.3 324.9v0.6 M678.6 325.2v0.3 M637.9 331.1v0.9 M640.5 331.1v0.5 M641.8 331.1v0.3 M643.7 331.1v0.5 M645.0 331.1v0.5 M646.9 331.1v0.9 M648.2 331.1v1.2 M650.1 331.1v0.9 M652.7 331.1v0.3 M654.6 331.1v1.2 M657.2 331.1v0.3 M659.1 331.1v0.9 M661.0 331.1v0.9 M662.3 331.1v0.3 M663.6 331.1v1.2 M666.2 331.1v1.2 M668.1 331.1v1.2 M670.7 331.1v0.9 M673.3 331.1v1.2 M674.6 331.1v0.9 M675.9 331.1v0.9 M678.5 331.1v0.5" stroke="#00b400" stroke-width="0.8" fill="none"/>
<rect x="679.68" y="390.40" width="42.46" height="5.6" fill="#00a800"/>
<rect x="679.68" y="391.20" width="42.46" height="4.0" fill="#1aea00"/>
<path d="M679.7 389.8v0.6 M680.8 389.0v1.4 M682.5 390.1v0.3 M683.6 389.8v0.6 M684.7 389.4v1.0 M687.0 389.0v1.4 M688.1 389.8v0.6 M690.4 389.4v1.0 M692.7 389.4v1.0 M695.0 389.0v1.4 M696.7 390.1v0.3 M698.4 389.4v1.0 M700.1 389.0v1.4 M701.8 389.4v1.0 M702.9 389.8v0.6 M704.6 389.4v1.0 M706.3 390.1v0.3 M708.6 389.0v1.4 M710.3 389.4v1.0 M712.0 389.4v1.0 M714.3 389.0v1.4 M716.0 389.4v1.0 M717.7 389.0v1.4 M720.0 389.8v0.6 M680.4 396.0v1.2 M681.7 396.0v0.5 M683.6 396.0v0.3 M686.2 396.0v0.3 M688.1 396.0v0.5 M689.4 396.0v1.2 M690.7 396.0v0.5 M693.3 396.0v1.2 M695.2 396.0v1.2 M697.1 396.0v0.9 M698.4 396.0v1.2 M701.0 396.0v1.2 M702.9 396.0v0.5 M704.8 396.0v0.3 M707.4 396.0v1.2 M709.3 396.0v1.2 M711.2 396.0v1.2 M712.5 396.0v0.3 M715.1 396.0v0.9 M716.4 396.0v1.2 M718.3 396.0v0.5 M720.2 396.0v0.3" stroke="#00b400" stroke-width="0.8" fill="none"/>
<rect x="722.14" y="325.50" width="42.46" height="5.6" fill="#00a800"/>
<rect x="722.14" y="326.30" width="42.46" height="4.0" fill="#1aea00"/>
<path d="M722.1 325.2v0.3 M723.2 324.1v1.4 M724.9 324.5v1.0 M727.2 324.5v1.0 M728.3 324.9v0.6 M730.0 324.1v1.4 M731.1 324.5v1.0 M733.4 324.9v0.6 M735.7 324.5v1.0 M738.0 324.1v1.4 M739.1 325.2v0.3 M740.2 324.1v1.4 M742.5 324.9v0.6 M744.2 324.9v0.6 M745.9 324.9v0.6 M747.6 324.9v0.6 M748.7 324.5v1.0 M749.8 325.2v0.3 M750.9 324.5v1.0 M752.6 324.1v1.4 M754.3 325.2v0.3 M756.0 324.1v1.4 M757.7 324.5v1.0 M759.4 325.2v0.3 M761.7 324.9v0.6 M722.8 331.1v0.5 M724.7 331.1v1.2 M726.0 331.1v0.3 M727.3 331.1v0.3 M729.9 331.1v0.5 M732.5 331.1v1.2 M735.1 331.1v0.5 M736.4 331.1v0.3 M738.3 331.1v0.9 M739.6 331.1v0.9 M742.2 331.1v0.3 M744.8 331.1v0.9 M746.7 331.1v0.9 M748.6 331.1v0.3 M751.2 331.1v1.2 M753.1 331.1v0.5 M755.0 331.1v1.2 M757.6 331.1v0.5 M759.5 331.1v0.9 M760.8 331.1v0.5 M762.7 331.1v0.5" stroke="#00b400" stroke-width="0.8" fill="none"/>
<defs><clipPath id="cg"><rect x="340.0" y="156.2" width="424.6" height="316.6"/></clipPath></defs>
<g clip-path="url(#cg)"><path d="M339.92 232.38 L340.52 234.12 L341.12 235.86 L341.72 237.61 L342.32 239.35 L342.92 241.07 L343.52 242.79 L344.12 244.49 L344.72 246.18 L345.32 247.84 L345.91 249.47 L346.51 251.08 L347.11 252.65 L347.71 254.19 L348.30 255.69 L348.90 257.15 L349.50 258.57 L350.09 259.94 L350.69 261.26 L351.28 262.52 L351.87 263.73 L352.46 264.88 L353.05 265.98 L353.65 267.00 L354.23 267.96 L354.82 268.86 L355.43 269.67 L356.03 270.41 L356.65 271.05 L357.29 271.58 L357.90 272.04 L358.55 272.34 L359.06 272.70 L359.68 272.71 L360.11 272.91 L360.60 272.68 L360.92 272.68 L361.21 273.14 L361.56 273.11 L361.92 273.06 L362.22 272.68 L362.79 272.85 L363.30 272.65 L363.94 272.49 L364.52 272.11 L365.15 271.67 L365.77 271.12 L366.37 270.47 L366.97 269.75 L367.57 268.94 L368.16 268.06 L368.75 267.10 L369.35 266.08 L369.94 265.00 L370.53 263.85 L371.12 262.65 L371.71 261.39 L372.31 260.07 L372.90 258.71 L373.50 257.30 L374.10 255.84 L374.69 254.34 L375.29 252.81 L375.89 251.24 L376.49 249.63 L377.08 248.00 L377.68 246.34 L378.28 244.66 L378.88 242.96 L379.48 241.25 L380.08 239.52 L380.68 237.78 L381.28 236.04 L381.88 234.29 L382.48 232.55 L383.08 230.81 L383.68 229.08 L384.28 227.36 L384.88 225.66 L385.48 223.98 L386.08 222.31 L386.69 220.67 L387.29 219.06 L387.89 217.48 L388.49 215.94 L389.10 214.43 L389.70 212.96 L390.30 211.53 L390.91 210.15 L391.52 208.82 L392.12 207.54 L392.73 206.31 L393.34 205.14 L393.95 204.02 L394.56 202.96 L395.16 201.96 L395.77 201.02 L396.38 200.15 L396.97 199.34 L397.55 198.57 L398.12 197.86 L398.71 197.20 L399.30 196.60 L399.91 196.02 L400.51 195.40 L401.32 195.14 L402.12 194.86 L402.96 194.50 L403.85 194.73 L404.71 194.79 L405.63 194.68 L406.34 195.27 L407.05 195.72 L407.60 196.37 L408.28 196.84 L408.88 197.44 L409.42 198.16 L410.04 198.84 L410.63 199.62 L411.22 200.47 L411.83 201.36 L412.44 202.32 L413.05 203.34 L413.66 204.42 L414.26 205.56 L414.87 206.76 L415.48 208.00 L416.09 209.31 L416.69 210.66 L417.30 212.05 L417.90 213.49 L418.50 214.98 L419.11 216.50 L419.71 218.06 L420.31 219.65 L420.92 221.27 L421.52 222.92 L422.12 224.59 L422.72 226.28 L423.32 227.99 L423.92 229.72 L424.52 231.45 L425.12 233.19 L425.72 234.93 L426.32 236.68 L426.92 238.42 L427.52 240.15 L428.12 241.88 L428.72 243.59 L429.32 245.28 L429.92 246.95 L430.52 248.60 L431.11 250.23 L431.71 251.82 L432.31 253.38 L432.91 254.90 L433.50 256.38 L434.10 257.82 L434.69 259.21 L435.29 260.56 L435.88 261.85 L436.48 263.09 L437.07 264.28 L437.66 265.40 L438.25 266.46 L438.84 267.46 L439.43 268.39 L440.03 269.24 L440.62 270.03 L441.22 270.73 L441.87 271.31 L442.48 271.83 L443.12 272.20 L443.67 272.58 L444.20 272.86 L444.75 272.94 L445.29 272.76 L445.60 273.03 L445.96 272.99 L446.28 272.95 L446.62 272.95 L447.00 272.95 L447.36 272.70 L448.01 272.88 L448.59 272.70 L449.05 272.23 L449.69 271.87 L450.32 271.39 L450.97 270.83 L451.56 270.14 L452.17 269.38 L452.77 268.54 L453.36 267.62 L453.95 266.63 L454.54 265.58 L455.13 264.47 L455.73 263.30 L456.32 262.06 L456.91 260.78 L457.51 259.44 L458.10 258.06 L458.70 256.62 L459.29 255.15 L459.89 253.63 L460.49 252.08 L461.09 250.49 L461.68 248.88 L462.28 247.23 L462.88 245.56 L463.48 243.87 L464.08 242.16 L464.68 240.44 L465.28 238.71 L465.88 236.97 L466.48 235.22 L467.08 233.48 L467.68 231.74 L468.28 230.00 L468.88 228.28 L469.48 226.57 L470.08 224.87 L470.68 223.20 L471.28 221.54 L471.89 219.92 L472.49 218.32 L473.09 216.76 L473.69 215.23 L474.30 213.74 L474.90 212.29 L475.51 210.88 L476.11 209.53 L476.72 208.22 L477.33 206.96 L477.93 205.76 L478.54 204.61 L479.15 203.52 L479.76 202.49 L480.37 201.52 L480.98 200.61 L481.57 199.76 L482.17 198.98 L482.75 198.24 L483.30 197.53 L483.98 197.01 L484.58 196.45 L485.22 195.94 L485.91 195.51 L486.67 195.19 L487.38 194.44 L488.29 194.37 L489.16 194.85 L490.05 194.78 L490.82 195.17 L491.56 195.56 L492.24 196.01 L492.91 196.48 L493.50 197.10 L494.05 197.77 L494.63 198.47 L495.23 199.21 L495.82 200.02 L496.43 200.88 L497.03 201.80 L497.64 202.79 L498.25 203.84 L498.86 204.95 L499.47 206.11 L500.08 207.33 L500.68 208.61 L501.29 209.93 L501.89 211.30 L502.50 212.72 L503.10 214.18 L503.71 215.68 L504.31 217.22 L504.91 218.80 L505.51 220.40 L506.12 222.04 L506.72 223.70 L507.32 225.38 L507.92 227.08 L508.52 228.80 L509.12 230.52 L509.72 232.26 L510.32 234.00 L510.92 235.75 L511.52 237.49 L512.12 239.23 L512.72 240.96 L513.32 242.68 L513.92 244.38 L514.52 246.06 L515.12 247.73 L515.71 249.36 L516.31 250.97 L516.91 252.55 L517.51 254.09 L518.10 255.60 L518.70 257.06 L519.30 258.48 L519.89 259.85 L520.49 261.17 L521.08 262.44 L521.67 263.65 L522.26 264.81 L522.85 265.91 L523.44 266.94 L524.03 267.90 L524.63 268.80 L525.22 269.62 L525.81 270.37 L526.46 271.00 L527.03 271.61 L527.71 272.00 L528.32 272.37 L528.94 272.57 L529.51 272.66 L529.94 272.85 L530.39 272.75 L530.67 273.17 L531.04 272.73 L531.35 272.89 L531.67 272.79 L532.18 273.07 L532.54 272.74 L533.05 272.58 L533.77 272.56 L534.34 272.16 L534.93 271.69 L535.54 271.14 L536.18 270.53 L536.78 269.80 L537.37 269.00 L537.96 268.12 L538.56 267.17 L539.15 266.15 L539.74 265.07 L540.33 263.93 L540.92 262.73 L541.52 261.47 L542.11 260.16 L542.70 258.80 L543.30 257.39 L543.90 255.94 L544.49 254.45 L545.09 252.91 L545.69 251.34 L546.29 249.74 L546.88 248.11 L547.48 246.45 L548.08 244.77 L548.68 243.08 L549.28 241.36 L549.88 239.63 L550.48 237.90 L551.08 236.16 L551.68 234.41 L552.28 232.67 L552.88 230.93 L553.48 229.20 L554.08 227.48 L554.68 225.77 L555.28 224.09 L555.88 222.42 L556.49 220.78 L557.09 219.17 L557.69 217.59 L558.29 216.04 L558.90 214.53 L559.50 213.06 L560.10 211.63 L560.71 210.25 L561.32 208.91 L561.92 207.62 L562.53 206.39 L563.14 205.21 L563.75 204.09 L564.36 203.03 L564.97 202.03 L565.57 201.09 L566.18 200.21 L566.76 199.38 L567.38 198.64 L567.90 197.87 L568.52 197.26 L569.09 196.63 L569.73 196.10 L570.33 195.47 L571.06 195.02 L571.89 194.81 L572.75 194.65 L573.64 194.44 L574.54 194.46 L575.34 194.95 L576.17 195.15 L576.92 195.54 L577.48 196.22 L578.05 196.84 L578.65 197.44 L579.27 198.06 L579.85 198.79 L580.44 199.56 L581.03 200.40 L581.63 201.30 L582.24 202.26 L582.85 203.27 L583.45 204.35 L584.06 205.48 L584.67 206.67 L585.28 207.92 L585.89 209.22 L586.49 210.56 L587.10 211.96 L587.70 213.40 L588.30 214.88 L588.91 216.40 L589.51 217.95 L590.11 219.54 L590.71 221.16 L591.32 222.81 L591.92 224.48 L592.52 226.17 L593.12 227.88 L593.72 229.60 L594.32 231.33 L594.92 233.07 L595.52 234.82 L596.12 236.56 L596.72 238.30 L597.32 240.04 L597.92 241.76 L598.52 243.47 L599.12 245.17 L599.72 246.84 L600.32 248.49 L600.91 250.12 L601.51 251.71 L602.11 253.27 L602.71 254.80 L603.30 256.28 L603.90 257.73 L604.49 259.12 L605.09 260.47 L605.68 261.77 L606.28 263.01 L606.87 264.20 L607.46 265.33 L608.05 266.39 L608.64 267.40 L609.23 268.33 L609.83 269.19 L610.42 269.98 L611.03 270.68 L611.64 271.30 L612.29 271.79 L612.91 272.20 L613.50 272.52 L614.01 272.83 L614.62 272.80 L615.07 272.84 L615.41 273.08 L615.80 272.67 L616.10 272.80 L616.47 273.12 L616.74 272.69 L617.31 273.02 L617.78 272.84 L618.28 272.55 L618.90 272.31 L619.52 271.94 L620.14 271.45 L620.77 270.87 L621.38 270.20 L621.98 269.44 L622.57 268.60 L623.16 267.68 L623.75 266.70 L624.34 265.66 L624.93 264.55 L625.53 263.38 L626.12 262.15 L626.71 260.87 L627.31 259.53 L627.90 258.15 L628.50 256.72 L629.09 255.25 L629.69 253.73 L630.29 252.18 L630.89 250.60 L631.48 248.98 L632.08 247.34 L632.68 245.67 L633.28 243.98 L633.88 242.28 L634.48 240.56 L635.08 238.82 L635.68 237.08 L636.28 235.34 L636.88 233.60 L637.48 231.86 L638.08 230.12 L638.68 228.39 L639.28 226.68 L639.88 224.98 L640.48 223.31 L641.08 221.65 L641.69 220.03 L642.29 218.43 L642.89 216.86 L643.49 215.33 L644.10 213.84 L644.70 212.38 L645.31 210.98 L645.91 209.62 L646.52 208.30 L647.13 207.04 L647.73 205.84 L648.34 204.68 L648.95 203.59 L649.56 202.56 L650.17 201.58 L650.77 200.67 L651.37 199.82 L651.94 199.01 L652.54 198.28 L653.15 197.62 L653.66 196.91 L654.31 196.39 L654.93 195.82 L655.59 195.29 L656.47 195.24 L657.18 194.57 L658.08 194.49 L658.97 194.61 L659.83 194.75 L660.63 195.07 L661.33 195.57 L662.07 195.93 L662.62 196.58 L663.29 197.07 L663.88 197.70 L664.44 198.41 L665.04 199.15 L665.64 199.95 L666.23 200.81 L666.83 201.74 L667.44 202.72 L668.05 203.77 L668.66 204.87 L669.27 206.03 L669.88 207.25 L670.48 208.52 L671.09 209.84 L671.69 211.21 L672.30 212.62 L672.90 214.08 L673.51 215.58 L674.11 217.12 L674.71 218.69 L675.31 220.29 L675.92 221.93 L676.52 223.59 L677.12 225.27 L677.72 226.97 L678.32 228.68 L678.92 230.41 L679.52 232.14 L680.12 233.89 L680.72 235.63 L681.32 237.38 L681.92 239.11 L682.52 240.84 L683.12 242.56 L683.72 244.27 L684.32 245.95 L684.92 247.62 L685.52 249.26 L686.11 250.87 L686.71 252.45 L687.31 253.99 L687.90 255.50 L688.50 256.96 L689.10 258.38 L689.69 259.76 L690.29 261.08 L690.88 262.36 L691.47 263.57 L692.06 264.73 L692.66 265.83 L693.25 266.87 L693.84 267.84 L694.43 268.74 L695.02 269.57 L695.62 270.32 L696.25 270.96 L696.83 271.57 L697.47 272.02 L698.05 272.43 L698.64 272.71 L699.18 272.91 L699.72 272.93 L700.12 273.08 L700.49 273.17 L700.85 273.13 L701.19 273.09 L701.52 272.91 L701.99 273.10 L702.48 273.02 L702.94 272.73 L703.52 272.51 L704.09 272.13 L704.77 271.77 L705.36 271.20 L705.97 270.57 L706.58 269.86 L707.17 269.05 L707.77 268.18 L708.36 267.23 L708.95 266.22 L709.54 265.15 L710.13 264.01 L710.72 262.81 L711.32 261.56 L711.91 260.25 L712.50 258.89 L713.10 257.49 L713.70 256.04 L714.29 254.55 L714.89 253.02 L715.49 251.45 L716.09 249.85 L716.68 248.22 L717.28 246.57 L717.88 244.89 L718.48 243.19 L719.08 241.48 L719.68 239.75 L720.28 238.01 L720.88 236.27 L721.48 234.53 L722.08 232.78 L722.68 231.04 L723.28 229.31 L723.88 227.59 L724.48 225.89 L725.08 224.20 L725.68 222.53 L726.29 220.89 L726.89 219.28 L727.49 217.69 L728.09 216.14 L728.70 214.63 L729.30 213.15 L729.90 211.72 L730.51 210.34 L731.11 209.00 L731.72 207.71 L732.33 206.47 L732.94 205.29 L733.55 204.17 L734.16 203.10 L734.77 202.10 L735.37 201.15 L735.97 200.26 L736.56 199.43 L737.18 198.69 L737.72 197.94 L738.29 197.27 L738.86 196.62 L739.51 196.11 L740.10 195.47 L740.92 195.25 L741.70 194.90 L742.55 194.80 L743.42 194.41 L744.29 194.67 L745.10 195.00 L745.86 195.37 L746.67 195.59 L747.30 196.15 L747.92 196.71 L748.47 197.38 L749.06 198.03 L749.62 198.76 L750.24 199.51 L750.82 200.36 L751.43 201.24 L752.04 202.19 L752.65 203.20 L753.25 204.28 L753.86 205.41 L754.47 206.59 L755.08 207.84 L755.69 209.13 L756.29 210.47 L756.90 211.86 L757.50 213.30 L758.10 214.78 L758.71 216.29 L759.31 217.85 L759.91 219.44 L760.51 221.05 L761.12 222.70 L761.72 224.37 L762.32 226.06 L762.92 227.76 L763.52 229.49 L764.12 231.22 L764.72 232.96 L765.32 234.70 L765.92 236.45 L766.52 238.19 L764.68 238.82 L764.08 237.08 L763.48 235.34 L762.88 233.59 L762.28 231.85 L761.68 230.13 L761.08 228.41 L760.48 226.71 L759.88 225.02 L759.28 223.36 L758.69 221.73 L758.09 220.12 L757.49 218.55 L756.89 217.01 L756.30 215.51 L755.70 214.05 L755.10 212.63 L754.51 211.26 L753.91 209.94 L753.32 208.68 L752.73 207.47 L752.14 206.32 L751.55 205.22 L750.95 204.20 L750.36 203.24 L749.77 202.35 L749.18 201.53 L748.56 200.82 L747.98 200.16 L747.34 199.64 L746.73 199.20 L746.08 198.94 L745.50 198.72 L744.93 198.67 L744.54 198.42 L744.10 198.46 L743.71 198.60 L743.38 198.79 L743.05 198.46 L742.70 198.54 L742.28 198.50 L741.90 198.74 L741.29 198.70 L740.74 198.94 L740.11 199.21 L739.48 199.62 L738.82 200.11 L738.24 200.76 L737.63 201.47 L737.03 202.27 L736.43 203.15 L735.84 204.10 L735.25 205.12 L734.66 206.20 L734.07 207.35 L733.48 208.55 L732.89 209.81 L732.29 211.13 L731.70 212.49 L731.10 213.90 L730.50 215.36 L729.91 216.86 L729.31 218.39 L728.71 219.96 L728.11 221.57 L727.52 223.20 L726.92 224.86 L726.32 226.54 L725.72 228.24 L725.12 229.95 L724.52 231.68 L723.92 233.42 L723.32 235.16 L722.72 236.91 L722.12 238.65 L721.52 240.39 L720.92 242.12 L720.32 243.84 L719.72 245.54 L719.12 247.22 L718.52 248.89 L717.91 250.53 L717.31 252.14 L716.71 253.72 L716.11 255.26 L715.50 256.77 L714.90 258.24 L714.30 259.67 L713.69 261.05 L713.08 262.38 L712.48 263.66 L711.87 264.89 L711.26 266.06 L710.65 267.18 L710.04 268.24 L709.43 269.25 L708.83 270.21 L708.22 271.11 L707.63 271.99 L707.04 272.83 L706.43 273.61 L705.91 274.49 L705.28 275.24 L704.66 276.01 L703.92 276.56 L703.21 277.16 L702.48 277.85 L701.61 277.95 L700.75 277.99 L699.91 277.79 L699.08 277.52 L698.28 277.11 L697.62 276.37 L696.96 275.67 L696.35 274.91 L695.73 274.16 L695.17 273.33 L694.55 272.54 L693.98 271.67 L693.38 270.78 L692.77 269.86 L692.16 268.89 L691.55 267.86 L690.94 266.78 L690.34 265.64 L689.73 264.44 L689.12 263.20 L688.51 261.89 L687.91 260.54 L687.30 259.15 L686.70 257.71 L686.10 256.22 L685.49 254.70 L684.89 253.14 L684.29 251.55 L683.68 249.93 L683.08 248.28 L682.48 246.61 L681.88 244.92 L681.28 243.21 L680.68 241.48 L680.08 239.75 L679.48 238.01 L678.88 236.27 L678.28 234.52 L677.68 232.78 L677.08 231.05 L676.48 229.32 L675.88 227.61 L675.28 225.92 L674.68 224.25 L674.08 222.60 L673.49 220.97 L672.89 219.38 L672.29 217.82 L671.69 216.30 L671.10 214.82 L670.50 213.38 L669.91 211.99 L669.31 210.64 L668.72 209.35 L668.12 208.11 L667.53 206.92 L666.94 205.80 L666.35 204.74 L665.76 203.74 L665.17 202.81 L664.57 201.97 L663.96 201.20 L663.36 200.51 L662.76 199.91 L662.12 199.45 L661.51 199.06 L660.98 198.69 L660.33 198.65 L659.87 198.45 L659.37 198.55 L658.97 198.61 L658.63 198.62 L658.32 198.72 L658.02 198.75 L657.53 198.32 L657.21 198.66 L656.67 198.65 L656.09 198.76 L655.54 199.06 L654.85 199.34 L654.26 199.84 L653.66 200.42 L653.03 201.07 L652.43 201.83 L651.83 202.67 L651.24 203.58 L650.65 204.57 L650.06 205.62 L649.47 206.73 L648.87 207.90 L648.28 209.14 L647.69 210.42 L647.09 211.76 L646.50 213.14 L645.90 214.58 L645.31 216.05 L644.71 217.57 L644.11 219.12 L643.51 220.71 L642.92 222.32 L642.32 223.97 L641.72 225.64 L641.12 227.33 L640.52 229.04 L639.92 230.76 L639.32 232.49 L638.72 234.23 L638.12 235.98 L637.52 237.72 L636.92 239.46 L636.32 241.20 L635.72 242.92 L635.12 244.63 L634.52 246.33 L633.92 248.00 L633.32 249.66 L632.71 251.28 L632.11 252.88 L631.51 254.44 L630.91 255.97 L630.30 257.46 L629.70 258.91 L629.09 260.32 L628.49 261.67 L627.88 262.98 L627.27 264.24 L626.67 265.44 L626.06 266.59 L625.45 267.69 L624.84 268.72 L624.23 269.70 L623.62 270.64 L623.02 271.53 L622.43 272.38 L621.86 273.23 L621.28 274.04 L620.70 274.85 L620.12 275.67 L619.42 276.31 L618.69 276.90 L618.06 277.83 L617.13 277.80 L616.30 278.30 L615.40 278.41 L614.59 277.74 L613.73 277.52 L612.98 276.91 L612.39 276.05 L611.70 275.40 L611.09 274.62 L610.51 273.81 L609.96 272.96 L609.37 272.13 L608.78 271.26 L608.17 270.36 L607.57 269.42 L606.96 268.42 L606.35 267.36 L605.74 266.25 L605.13 265.09 L604.52 263.87 L603.92 262.59 L603.31 261.27 L602.71 259.90 L602.10 258.48 L601.50 257.02 L600.89 255.52 L600.29 253.98 L599.69 252.40 L599.09 250.80 L598.48 249.16 L597.88 247.50 L597.28 245.82 L596.68 244.12 L596.08 242.40 L595.48 240.68 L594.88 238.94 L594.28 237.20 L593.68 235.45 L593.08 233.71 L592.48 231.97 L591.88 230.24 L591.28 228.52 L590.68 226.82 L590.08 225.14 L589.48 223.47 L588.89 221.84 L588.29 220.23 L587.69 218.65 L587.09 217.11 L586.50 215.60 L585.90 214.14 L585.30 212.72 L584.71 211.35 L584.11 210.03 L583.52 208.76 L582.93 207.55 L582.34 206.39 L581.75 205.30 L581.15 204.26 L580.56 203.30 L579.97 202.41 L579.37 201.60 L578.76 200.87 L578.15 200.23 L577.53 199.69 L576.95 199.21 L576.35 198.87 L575.72 198.70 L575.08 198.75 L574.63 198.66 L574.26 198.53 L573.86 198.81 L573.56 198.76 L573.25 198.60 L572.91 198.62 L572.54 198.71 L572.07 198.70 L571.47 198.66 L570.91 198.88 L570.28 199.16 L569.70 199.61 L569.02 200.07 L568.44 200.71 L567.82 201.41 L567.23 202.21 L566.63 203.08 L566.04 204.03 L565.45 205.05 L564.86 206.13 L564.27 207.27 L563.68 208.47 L563.08 209.73 L562.49 211.04 L561.90 212.40 L561.30 213.81 L560.70 215.26 L560.11 216.75 L559.51 218.29 L558.91 219.86 L558.31 221.46 L557.72 223.09 L557.12 224.75 L556.52 226.43 L555.92 228.12 L555.32 229.84 L554.72 231.57 L554.12 233.30 L553.52 235.04 L552.92 236.79 L552.32 238.53 L551.72 240.27 L551.12 242.00 L550.52 243.72 L549.92 245.43 L549.32 247.11 L548.72 248.78 L548.11 250.42 L547.51 252.03 L546.91 253.61 L546.31 255.16 L545.70 256.67 L545.10 258.14 L544.50 259.57 L543.89 260.95 L543.28 262.29 L542.68 263.58 L542.07 264.81 L541.46 265.99 L540.85 267.11 L540.24 268.18 L539.64 269.19 L539.03 270.15 L538.42 271.05 L537.82 271.93 L537.26 272.79 L536.67 273.60 L536.06 274.38 L535.43 275.12 L534.95 276.09 L534.26 276.79 L533.42 277.15 L532.73 277.94 L531.85 278.14 L530.96 278.38 L530.13 277.81 L529.21 277.88 L528.46 277.22 L527.69 276.69 L527.06 275.88 L526.48 275.05 L525.89 274.26 L525.37 273.38 L524.74 272.60 L524.19 271.72 L523.58 270.85 L522.97 269.93 L522.37 268.96 L521.76 267.93 L521.15 266.85 L520.54 265.72 L519.93 264.53 L519.32 263.28 L518.71 261.98 L518.11 260.64 L517.50 259.24 L516.90 257.80 L516.30 256.32 L515.69 254.80 L515.09 253.25 L514.49 251.66 L513.89 250.04 L513.28 248.39 L512.68 246.72 L512.08 245.03 L511.48 243.32 L510.88 241.60 L510.28 239.87 L509.68 238.13 L509.08 236.38 L508.48 234.64 L507.88 232.90 L507.28 231.16 L506.68 229.44 L506.08 227.73 L505.48 226.03 L504.88 224.36 L504.28 222.71 L503.69 221.08 L503.09 219.49 L502.49 217.93 L501.89 216.40 L501.30 214.92 L500.70 213.47 L500.11 212.08 L499.51 210.73 L498.92 209.43 L498.32 208.19 L497.73 207.00 L497.14 205.87 L496.55 204.81 L495.96 203.81 L495.37 202.88 L494.77 202.02 L494.18 201.23 L493.57 200.54 L492.97 199.94 L492.35 199.45 L491.70 199.09 L491.09 198.84 L490.56 198.60 L490.04 198.50 L489.58 198.48 L489.15 198.59 L488.84 198.37 L488.51 198.84 L488.22 198.87 L487.73 198.36 L487.29 198.41 L486.78 198.49 L486.22 198.64 L485.62 198.90 L485.10 199.36 L484.45 199.79 L483.83 200.36 L483.23 201.02 L482.62 201.77 L482.03 202.61 L481.44 203.52 L480.85 204.50 L480.26 205.55 L479.67 206.65 L479.07 207.82 L478.48 209.05 L477.89 210.33 L477.29 211.67 L476.70 213.05 L476.10 214.48 L475.51 215.95 L474.91 217.47 L474.31 219.02 L473.71 220.60 L473.12 222.22 L472.52 223.86 L471.92 225.53 L471.32 227.22 L470.72 228.92 L470.12 230.64 L469.52 232.38 L468.92 234.12 L468.32 235.86 L467.72 237.60 L467.12 239.34 L466.52 241.08 L465.92 242.81 L465.32 244.52 L464.72 246.22 L464.12 247.89 L463.52 249.55 L462.91 251.17 L462.31 252.77 L461.71 254.34 L461.11 255.87 L460.50 257.36 L459.90 258.82 L459.29 260.22 L458.69 261.58 L458.08 262.90 L457.47 264.16 L456.87 265.37 L456.26 266.52 L455.65 267.61 L455.04 268.66 L454.43 269.64 L453.83 270.58 L453.24 271.48 L452.63 272.33 L452.08 273.19 L451.51 274.02 L450.95 274.85 L450.21 275.45 L449.59 276.21 L449.04 277.17 L448.20 277.53 L447.38 277.95 L446.52 278.16 L445.64 278.09 L444.80 277.81 L443.91 277.63 L443.25 276.81 L442.60 276.09 L441.93 275.40 L441.28 274.69 L440.72 273.86 L440.13 273.04 L439.58 272.18 L438.98 271.32 L438.37 270.43 L437.77 269.48 L437.16 268.48 L436.55 267.44 L435.94 266.33 L435.33 265.17 L434.72 263.95 L434.12 262.68 L433.51 261.36 L432.91 259.99 L432.30 258.58 L431.70 257.12 L431.09 255.62 L430.49 254.08 L429.89 252.51 L429.29 250.91 L428.68 249.27 L428.08 247.61 L427.48 245.93 L426.88 244.23 L426.28 242.52 L425.68 240.79 L425.08 239.06 L424.48 237.31 L423.88 235.57 L423.28 233.82 L422.68 232.09 L422.08 230.36 L421.48 228.64 L420.88 226.93 L420.28 225.25 L419.68 223.58 L419.08 221.94 L418.49 220.33 L417.89 218.75 L417.29 217.21 L416.70 215.70 L416.10 214.24 L415.50 212.82 L414.91 211.44 L414.31 210.12 L413.72 208.84 L413.13 207.63 L412.54 206.47 L411.94 205.37 L411.35 204.33 L410.76 203.36 L410.17 202.47 L409.58 201.64 L408.97 200.91 L408.36 200.26 L407.78 199.68 L407.12 199.28 L406.52 198.92 L406.00 198.60 L405.35 198.62 L404.86 198.57 L404.37 198.82 L404.09 198.49 L403.75 198.47 L403.44 198.75 L403.08 198.55 L402.68 198.57 L402.29 198.74 L401.69 198.70 L401.10 198.86 L400.49 199.15 L399.88 199.55 L399.25 200.05 L398.63 200.66 L398.02 201.36 L397.43 202.16 L396.84 203.03 L396.24 203.97 L395.65 204.98 L395.06 206.06 L394.47 207.19 L393.88 208.39 L393.28 209.64 L392.69 210.95 L392.10 212.31 L391.50 213.71 L390.90 215.16 L390.31 216.65 L389.71 218.18 L389.11 219.75 L388.51 221.35 L387.92 222.98 L387.32 224.63 L386.72 226.31 L386.12 228.01 L385.52 229.72 L384.92 231.45 L384.32 233.19 L383.72 234.93 L383.12 236.67 L382.52 238.42 L381.92 240.16 L381.32 241.89 L380.72 243.61 L380.12 245.31 L379.52 247.00 L378.92 248.67 L378.31 250.31 L377.71 251.92 L377.11 253.51 L376.51 255.06 L375.90 256.57 L375.30 258.05 L374.70 259.48 L374.09 260.86 L373.49 262.20 L372.88 263.49 L372.27 264.73 L371.66 265.91 L371.05 267.04 L370.45 268.11 L369.84 269.12 L369.23 270.09 L368.63 271.00 L368.03 271.88 L367.43 272.71 L366.85 273.54 L366.28 274.36 L365.66 275.11 L365.10 275.96 L364.41 276.63 L363.78 277.50 L362.88 277.65 L362.04 277.91 L361.19 277.98 L360.28 278.32 L359.40 277.98 L358.69 277.21 L357.92 276.68 L357.34 275.82 L356.65 275.15 L356.10 274.30 L355.51 273.49 L354.95 272.65 L354.37 271.79 L353.77 270.92 L353.18 269.99 L352.57 269.02 L351.95 268.00 L351.35 266.93 L350.74 265.79 L350.13 264.61 L349.52 263.36 L348.91 262.07 L348.31 260.73 L347.70 259.34 L347.10 257.90 L346.50 256.42 L345.89 254.91 L345.29 253.35 L344.69 251.76 L344.09 250.15 L343.48 248.50 L342.88 246.83 L342.28 245.14 L341.68 243.44 L341.08 241.71 L340.48 239.98 L339.88 238.24 L339.28 236.50 L338.68 234.75 L338.08 233.01 Z" fill="#ffe600" stroke="#a88800" stroke-width="0.9" stroke-opacity="0.5" stroke-linejoin="round"/><path d="M339.92 232.38 L340.52 234.12 L341.12 235.86 L341.72 237.61 L342.32 239.35 L342.92 241.07 L343.52 242.79 L344.12 244.49 L344.72 246.18 L345.32 247.84 L345.91 249.47 L346.51 251.08 L347.11 252.65 L347.71 254.19 L348.30 255.69 L348.90 257.15 L349.50 258.57 L350.09 259.94 L350.69 261.26 L351.28 262.52 L351.87 263.73 L352.46 264.88 L353.05 265.98 L353.65 267.00 L354.23 267.96 L354.82 268.86 L355.43 269.67 L356.03 270.41 L356.65 271.05 L357.29 271.58 L357.90 272.04 L358.55 272.34 L359.06 272.70 L359.68 272.71 L360.11 272.91 L360.60 272.68 L360.92 272.68 L361.21 273.14 L361.56 273.11 L361.92 273.06 L362.22 272.68 L362.79 272.85 L363.30 272.65 L363.94 272.49 L364.52 272.11 L365.15 271.67 L365.77 271.12 L366.37 270.47 L366.97 269.75 L367.57 268.94 L368.16 268.06 L368.75 267.10 L369.35 266.08 L369.94 265.00 L370.53 263.85 L371.12 262.65 L371.71 261.39 L372.31 260.07 L372.90 258.71 L373.50 257.30 L374.10 255.84 L374.69 254.34 L375.29 252.81 L375.89 251.24 L376.49 249.63 L377.08 248.00 L377.68 246.34 L378.28 244.66 L378.88 242.96 L379.48 241.25 L380.08 239.52 L380.68 237.78 L381.28 236.04 L381.88 234.29 L382.48 232.55 L383.08 230.81 L383.68 229.08 L384.28 227.36 L384.88 225.66 L385.48 223.98 L386.08 222.31 L386.69 220.67 L387.29 219.06 L387.89 217.48 L388.49 215.94 L389.10 214.43 L389.70 212.96 L390.30 211.53 L390.91 210.15 L391.52 208.82 L392.12 207.54 L392.73 206.31 L393.34 205.14 L393.95 204.02 L394.56 202.96 L395.16 201.96 L395.77 201.02 L396.38 200.15 L396.97 199.34 L397.55 198.57 L398.12 197.86 L398.71 197.20 L399.30 196.60 L399.91 196.02 L400.51 195.40 L401.32 195.14 L402.12 194.86 L402.96 194.50 L403.85 194.73 L404.71 194.79 L405.63 194.68 L406.34 195.27 L407.05 195.72 L407.60 196.37 L408.28 196.84 L408.88 197.44 L409.42 198.16 L410.04 198.84 L410.63 199.62 L411.22 200.47 L411.83 201.36 L412.44 202.32 L413.05 203.34 L413.66 204.42 L414.26 205.56 L414.87 206.76 L415.48 208.00 L416.09 209.31 L416.69 210.66 L417.30 212.05 L417.90 213.49 L418.50 214.98 L419.11 216.50 L419.71 218.06 L420.31 219.65 L420.92 221.27 L421.52 222.92 L422.12 224.59 L422.72 226.28 L423.32 227.99 L423.92 229.72 L424.52 231.45 L425.12 233.19 L425.72 234.93 L426.32 236.68 L426.92 238.42 L427.52 240.15 L428.12 241.88 L428.72 243.59 L429.32 245.28 L429.92 246.95 L430.52 248.60 L431.11 250.23 L431.71 251.82 L432.31 253.38 L432.91 254.90 L433.50 256.38 L434.10 257.82 L434.69 259.21 L435.29 260.56 L435.88 261.85 L436.48 263.09 L437.07 264.28 L437.66 265.40 L438.25 266.46 L438.84 267.46 L439.43 268.39 L440.03 269.24 L440.62 270.03 L441.22 270.73 L441.87 271.31 L442.48 271.83 L443.12 272.20 L443.67 272.58 L444.20 272.86 L444.75 272.94 L445.29 272.76 L445.60 273.03 L445.96 272.99 L446.28 272.95 L446.62 272.95 L447.00 272.95 L447.36 272.70 L448.01 272.88 L448.59 272.70 L449.05 272.23 L449.69 271.87 L450.32 271.39 L450.97 270.83 L451.56 270.14 L452.17 269.38 L452.77 268.54 L453.36 267.62 L453.95 266.63 L454.54 265.58 L455.13 264.47 L455.73 263.30 L456.32 262.06 L456.91 260.78 L457.51 259.44 L458.10 258.06 L458.70 256.62 L459.29 255.15 L459.89 253.63 L460.49 252.08 L461.09 250.49 L461.68 248.88 L462.28 247.23 L462.88 245.56 L463.48 243.87 L464.08 242.16 L464.68 240.44 L465.28 238.71 L465.88 236.97 L466.48 235.22 L467.08 233.48 L467.68 231.74 L468.28 230.00 L468.88 228.28 L469.48 226.57 L470.08 224.87 L470.68 223.20 L471.28 221.54 L471.89 219.92 L472.49 218.32 L473.09 216.76 L473.69 215.23 L474.30 213.74 L474.90 212.29 L475.51 210.88 L476.11 209.53 L476.72 208.22 L477.33 206.96 L477.93 205.76 L478.54 204.61 L479.15 203.52 L479.76 202.49 L480.37 201.52 L480.98 200.61 L481.57 199.76 L482.17 198.98 L482.75 198.24 L483.30 197.53 L483.98 197.01 L484.58 196.45 L485.22 195.94 L485.91 195.51 L486.67 195.19 L487.38 194.44 L488.29 194.37 L489.16 194.85 L490.05 194.78 L490.82 195.17 L491.56 195.56 L492.24 196.01 L492.91 196.48 L493.50 197.10 L494.05 197.77 L494.63 198.47 L495.23 199.21 L495.82 200.02 L496.43 200.88 L497.03 201.80 L497.64 202.79 L498.25 203.84 L498.86 204.95 L499.47 206.11 L500.08 207.33 L500.68 208.61 L501.29 209.93 L501.89 211.30 L502.50 212.72 L503.10 214.18 L503.71 215.68 L504.31 217.22 L504.91 218.80 L505.51 220.40 L506.12 222.04 L506.72 223.70 L507.32 225.38 L507.92 227.08 L508.52 228.80 L509.12 230.52 L509.72 232.26 L510.32 234.00 L510.92 235.75 L511.52 237.49 L512.12 239.23 L512.72 240.96 L513.32 242.68 L513.92 244.38 L514.52 246.06 L515.12 247.73 L515.71 249.36 L516.31 250.97 L516.91 252.55 L517.51 254.09 L518.10 255.60 L518.70 257.06 L519.30 258.48 L519.89 259.85 L520.49 261.17 L521.08 262.44 L521.67 263.65 L522.26 264.81 L522.85 265.91 L523.44 266.94 L524.03 267.90 L524.63 268.80 L525.22 269.62 L525.81 270.37 L526.46 271.00 L527.03 271.61 L527.71 272.00 L528.32 272.37 L528.94 272.57 L529.51 272.66 L529.94 272.85 L530.39 272.75 L530.67 273.17 L531.04 272.73 L531.35 272.89 L531.67 272.79 L532.18 273.07 L532.54 272.74 L533.05 272.58 L533.77 272.56 L534.34 272.16 L534.93 271.69 L535.54 271.14 L536.18 270.53 L536.78 269.80 L537.37 269.00 L537.96 268.12 L538.56 267.17 L539.15 266.15 L539.74 265.07 L540.33 263.93 L540.92 262.73 L541.52 261.47 L542.11 260.16 L542.70 258.80 L543.30 257.39 L543.90 255.94 L544.49 254.45 L545.09 252.91 L545.69 251.34 L546.29 249.74 L546.88 248.11 L547.48 246.45 L548.08 244.77 L548.68 243.08 L549.28 241.36 L549.88 239.63 L550.48 237.90 L551.08 236.16 L551.68 234.41 L552.28 232.67 L552.88 230.93 L553.48 229.20 L554.08 227.48 L554.68 225.77 L555.28 224.09 L555.88 222.42 L556.49 220.78 L557.09 219.17 L557.69 217.59 L558.29 216.04 L558.90 214.53 L559.50 213.06 L560.10 211.63 L560.71 210.25 L561.32 208.91 L561.92 207.62 L562.53 206.39 L563.14 205.21 L563.75 204.09 L564.36 203.03 L564.97 202.03 L565.57 201.09 L566.18 200.21 L566.76 199.38 L567.38 198.64 L567.90 197.87 L568.52 197.26 L569.09 196.63 L569.73 196.10 L570.33 195.47 L571.06 195.02 L571.89 194.81 L572.75 194.65 L573.64 194.44 L574.54 194.46 L575.34 194.95 L576.17 195.15 L576.92 195.54 L577.48 196.22 L578.05 196.84 L578.65 197.44 L579.27 198.06 L579.85 198.79 L580.44 199.56 L581.03 200.40 L581.63 201.30 L582.24 202.26 L582.85 203.27 L583.45 204.35 L584.06 205.48 L584.67 206.67 L585.28 207.92 L585.89 209.22 L586.49 210.56 L587.10 211.96 L587.70 213.40 L588.30 214.88 L588.91 216.40 L589.51 217.95 L590.11 219.54 L590.71 221.16 L591.32 222.81 L591.92 224.48 L592.52 226.17 L593.12 227.88 L593.72 229.60 L594.32 231.33 L594.92 233.07 L595.52 234.82 L596.12 236.56 L596.72 238.30 L597.32 240.04 L597.92 241.76 L598.52 243.47 L599.12 245.17 L599.72 246.84 L600.32 248.49 L600.91 250.12 L601.51 251.71 L602.11 253.27 L602.71 254.80 L603.30 256.28 L603.90 257.73 L604.49 259.12 L605.09 260.47 L605.68 261.77 L606.28 263.01 L606.87 264.20 L607.46 265.33 L608.05 266.39 L608.64 267.40 L609.23 268.33 L609.83 269.19 L610.42 269.98 L611.03 270.68 L611.64 271.30 L612.29 271.79 L612.91 272.20 L613.50 272.52 L614.01 272.83 L614.62 272.80 L615.07 272.84 L615.41 273.08 L615.80 272.67 L616.10 272.80 L616.47 273.12 L616.74 272.69 L617.31 273.02 L617.78 272.84 L618.28 272.55 L618.90 272.31 L619.52 271.94 L620.14 271.45 L620.77 270.87 L621.38 270.20 L621.98 269.44 L622.57 268.60 L623.16 267.68 L623.75 266.70 L624.34 265.66 L624.93 264.55 L625.53 263.38 L626.12 262.15 L626.71 260.87 L627.31 259.53 L627.90 258.15 L628.50 256.72 L629.09 255.25 L629.69 253.73 L630.29 252.18 L630.89 250.60 L631.48 248.98 L632.08 247.34 L632.68 245.67 L633.28 243.98 L633.88 242.28 L634.48 240.56 L635.08 238.82 L635.68 237.08 L636.28 235.34 L636.88 233.60 L637.48 231.86 L638.08 230.12 L638.68 228.39 L639.28 226.68 L639.88 224.98 L640.48 223.31 L641.08 221.65 L641.69 220.03 L642.29 218.43 L642.89 216.86 L643.49 215.33 L644.10 213.84 L644.70 212.38 L645.31 210.98 L645.91 209.62 L646.52 208.30 L647.13 207.04 L647.73 205.84 L648.34 204.68 L648.95 203.59 L649.56 202.56 L650.17 201.58 L650.77 200.67 L651.37 199.82 L651.94 199.01 L652.54 198.28 L653.15 197.62 L653.66 196.91 L654.31 196.39 L654.93 195.82 L655.59 195.29 L656.47 195.24 L657.18 194.57 L658.08 194.49 L658.97 194.61 L659.83 194.75 L660.63 195.07 L661.33 195.57 L662.07 195.93 L662.62 196.58 L663.29 197.07 L663.88 197.70 L664.44 198.41 L665.04 199.15 L665.64 199.95 L666.23 200.81 L666.83 201.74 L667.44 202.72 L668.05 203.77 L668.66 204.87 L669.27 206.03 L669.88 207.25 L670.48 208.52 L671.09 209.84 L671.69 211.21 L672.30 212.62 L672.90 214.08 L673.51 215.58 L674.11 217.12 L674.71 218.69 L675.31 220.29 L675.92 221.93 L676.52 223.59 L677.12 225.27 L677.72 226.97 L678.32 228.68 L678.92 230.41 L679.52 232.14 L680.12 233.89 L680.72 235.63 L681.32 237.38 L681.92 239.11 L682.52 240.84 L683.12 242.56 L683.72 244.27 L684.32 245.95 L684.92 247.62 L685.52 249.26 L686.11 250.87 L686.71 252.45 L687.31 253.99 L687.90 255.50 L688.50 256.96 L689.10 258.38 L689.69 259.76 L690.29 261.08 L690.88 262.36 L691.47 263.57 L692.06 264.73 L692.66 265.83 L693.25 266.87 L693.84 267.84 L694.43 268.74 L695.02 269.57 L695.62 270.32 L696.25 270.96 L696.83 271.57 L697.47 272.02 L698.05 272.43 L698.64 272.71 L699.18 272.91 L699.72 272.93 L700.12 273.08 L700.49 273.17 L700.85 273.13 L701.19 273.09 L701.52 272.91 L701.99 273.10 L702.48 273.02 L702.94 272.73 L703.52 272.51 L704.09 272.13 L704.77 271.77 L705.36 271.20 L705.97 270.57 L706.58 269.86 L707.17 269.05 L707.77 268.18 L708.36 267.23 L708.95 266.22 L709.54 265.15 L710.13 264.01 L710.72 262.81 L711.32 261.56 L711.91 260.25 L712.50 258.89 L713.10 257.49 L713.70 256.04 L714.29 254.55 L714.89 253.02 L715.49 251.45 L716.09 249.85 L716.68 248.22 L717.28 246.57 L717.88 244.89 L718.48 243.19 L719.08 241.48 L719.68 239.75 L720.28 238.01 L720.88 236.27 L721.48 234.53 L722.08 232.78 L722.68 231.04 L723.28 229.31 L723.88 227.59 L724.48 225.89 L725.08 224.20 L725.68 222.53 L726.29 220.89 L726.89 219.28 L727.49 217.69 L728.09 216.14 L728.70 214.63 L729.30 213.15 L729.90 211.72 L730.51 210.34 L731.11 209.00 L731.72 207.71 L732.33 206.47 L732.94 205.29 L733.55 204.17 L734.16 203.10 L734.77 202.10 L735.37 201.15 L735.97 200.26 L736.56 199.43 L737.18 198.69 L737.72 197.94 L738.29 197.27 L738.86 196.62 L739.51 196.11 L740.10 195.47 L740.92 195.25 L741.70 194.90 L742.55 194.80 L743.42 194.41 L744.29 194.67 L745.10 195.00 L745.86 195.37 L746.67 195.59 L747.30 196.15 L747.92 196.71 L748.47 197.38 L749.06 198.03 L749.62 198.76 L750.24 199.51 L750.82 200.36 L751.43 201.24 L752.04 202.19 L752.65 203.20 L753.25 204.28 L753.86 205.41 L754.47 206.59 L755.08 207.84 L755.69 209.13 L756.29 210.47 L756.90 211.86 L757.50 213.30 L758.10 214.78 L758.71 216.29 L759.31 217.85 L759.91 219.44 L760.51 221.05 L761.12 222.70 L761.72 224.37 L762.32 226.06 L762.92 227.76 L763.52 229.49 L764.12 231.22 L764.72 232.96 L765.32 234.70 L765.92 236.45 L766.52 238.19 L764.68 238.82 L764.08 237.08 L763.48 235.34 L762.88 233.59 L762.28 231.85 L761.68 230.13 L761.08 228.41 L760.48 226.71 L759.88 225.02 L759.28 223.36 L758.69 221.73 L758.09 220.12 L757.49 218.55 L756.89 217.01 L756.30 215.51 L755.70 214.05 L755.10 212.63 L754.51 211.26 L753.91 209.94 L753.32 208.68 L752.73 207.47 L752.14 206.32 L751.55 205.22 L750.95 204.20 L750.36 203.24 L749.77 202.35 L749.18 201.53 L748.56 200.82 L747.98 200.16 L747.34 199.64 L746.73 199.20 L746.08 198.94 L745.50 198.72 L744.93 198.67 L744.54 198.42 L744.10 198.46 L743.71 198.60 L743.38 198.79 L743.05 198.46 L742.70 198.54 L742.28 198.50 L741.90 198.74 L741.29 198.70 L740.74 198.94 L740.11 199.21 L739.48 199.62 L738.82 200.11 L738.24 200.76 L737.63 201.47 L737.03 202.27 L736.43 203.15 L735.84 204.10 L735.25 205.12 L734.66 206.20 L734.07 207.35 L733.48 208.55 L732.89 209.81 L732.29 211.13 L731.70 212.49 L731.10 213.90 L730.50 215.36 L729.91 216.86 L729.31 218.39 L728.71 219.96 L728.11 221.57 L727.52 223.20 L726.92 224.86 L726.32 226.54 L725.72 228.24 L725.12 229.95 L724.52 231.68 L723.92 233.42 L723.32 235.16 L722.72 236.91 L722.12 238.65 L721.52 240.39 L720.92 242.12 L720.32 243.84 L719.72 245.54 L719.12 247.22 L718.52 248.89 L717.91 250.53 L717.31 252.14 L716.71 253.72 L716.11 255.26 L715.50 256.77 L714.90 258.24 L714.30 259.67 L713.69 261.05 L713.08 262.38 L712.48 263.66 L711.87 264.89 L711.26 266.06 L710.65 267.18 L710.04 268.24 L709.43 269.25 L708.83 270.21 L708.22 271.11 L707.63 271.99 L707.04 272.83 L706.43 273.61 L705.91 274.49 L705.28 275.24 L704.66 276.01 L703.92 276.56 L703.21 277.16 L702.48 277.85 L701.61 277.95 L700.75 277.99 L699.91 277.79 L699.08 277.52 L698.28 277.11 L697.62 276.37 L696.96 275.67 L696.35 274.91 L695.73 274.16 L695.17 273.33 L694.55 272.54 L693.98 271.67 L693.38 270.78 L692.77 269.86 L692.16 268.89 L691.55 267.86 L690.94 266.78 L690.34 265.64 L689.73 264.44 L689.12 263.20 L688.51 261.89 L687.91 260.54 L687.30 259.15 L686.70 257.71 L686.10 256.22 L685.49 254.70 L684.89 253.14 L684.29 251.55 L683.68 249.93 L683.08 248.28 L682.48 246.61 L681.88 244.92 L681.28 243.21 L680.68 241.48 L680.08 239.75 L679.48 238.01 L678.88 236.27 L678.28 234.52 L677.68 232.78 L677.08 231.05 L676.48 229.32 L675.88 227.61 L675.28 225.92 L674.68 224.25 L674.08 222.60 L673.49 220.97 L672.89 219.38 L672.29 217.82 L671.69 216.30 L671.10 214.82 L670.50 213.38 L669.91 211.99 L669.31 210.64 L668.72 209.35 L668.12 208.11 L667.53 206.92 L666.94 205.80 L666.35 204.74 L665.76 203.74 L665.17 202.81 L664.57 201.97 L663.96 201.20 L663.36 200.51 L662.76 199.91 L662.12 199.45 L661.51 199.06 L660.98 198.69 L660.33 198.65 L659.87 198.45 L659.37 198.55 L658.97 198.61 L658.63 198.62 L658.32 198.72 L658.02 198.75 L657.53 198.32 L657.21 198.66 L656.67 198.65 L656.09 198.76 L655.54 199.06 L654.85 199.34 L654.26 199.84 L653.66 200.42 L653.03 201.07 L652.43 201.83 L651.83 202.67 L651.24 203.58 L650.65 204.57 L650.06 205.62 L649.47 206.73 L648.87 207.90 L648.28 209.14 L647.69 210.42 L647.09 211.76 L646.50 213.14 L645.90 214.58 L645.31 216.05 L644.71 217.57 L644.11 219.12 L643.51 220.71 L642.92 222.32 L642.32 223.97 L641.72 225.64 L641.12 227.33 L640.52 229.04 L639.92 230.76 L639.32 232.49 L638.72 234.23 L638.12 235.98 L637.52 237.72 L636.92 239.46 L636.32 241.20 L635.72 242.92 L635.12 244.63 L634.52 246.33 L633.92 248.00 L633.32 249.66 L632.71 251.28 L632.11 252.88 L631.51 254.44 L630.91 255.97 L630.30 257.46 L629.70 258.91 L629.09 260.32 L628.49 261.67 L627.88 262.98 L627.27 264.24 L626.67 265.44 L626.06 266.59 L625.45 267.69 L624.84 268.72 L624.23 269.70 L623.62 270.64 L623.02 271.53 L622.43 272.38 L621.86 273.23 L621.28 274.04 L620.70 274.85 L620.12 275.67 L619.42 276.31 L618.69 276.90 L618.06 277.83 L617.13 277.80 L616.30 278.30 L615.40 278.41 L614.59 277.74 L613.73 277.52 L612.98 276.91 L612.39 276.05 L611.70 275.40 L611.09 274.62 L610.51 273.81 L609.96 272.96 L609.37 272.13 L608.78 271.26 L608.17 270.36 L607.57 269.42 L606.96 268.42 L606.35 267.36 L605.74 266.25 L605.13 265.09 L604.52 263.87 L603.92 262.59 L603.31 261.27 L602.71 259.90 L602.10 258.48 L601.50 257.02 L600.89 255.52 L600.29 253.98 L599.69 252.40 L599.09 250.80 L598.48 249.16 L597.88 247.50 L597.28 245.82 L596.68 244.12 L596.08 242.40 L595.48 240.68 L594.88 238.94 L594.28 237.20 L593.68 235.45 L593.08 233.71 L592.48 231.97 L591.88 230.24 L591.28 228.52 L590.68 226.82 L590.08 225.14 L589.48 223.47 L588.89 221.84 L588.29 220.23 L587.69 218.65 L587.09 217.11 L586.50 215.60 L585.90 214.14 L585.30 212.72 L584.71 211.35 L584.11 210.03 L583.52 208.76 L582.93 207.55 L582.34 206.39 L581.75 205.30 L581.15 204.26 L580.56 203.30 L579.97 202.41 L579.37 201.60 L578.76 200.87 L578.15 200.23 L577.53 199.69 L576.95 199.21 L576.35 198.87 L575.72 198.70 L575.08 198.75 L574.63 198.66 L574.26 198.53 L573.86 198.81 L573.56 198.76 L573.25 198.60 L572.91 198.62 L572.54 198.71 L572.07 198.70 L571.47 198.66 L570.91 198.88 L570.28 199.16 L569.70 199.61 L569.02 200.07 L568.44 200.71 L567.82 201.41 L567.23 202.21 L566.63 203.08 L566.04 204.03 L565.45 205.05 L564.86 206.13 L564.27 207.27 L563.68 208.47 L563.08 209.73 L562.49 211.04 L561.90 212.40 L561.30 213.81 L560.70 215.26 L560.11 216.75 L559.51 218.29 L558.91 219.86 L558.31 221.46 L557.72 223.09 L557.12 224.75 L556.52 226.43 L555.92 228.12 L555.32 229.84 L554.72 231.57 L554.12 233.30 L553.52 235.04 L552.92 236.79 L552.32 238.53 L551.72 240.27 L551.12 242.00 L550.52 243.72 L549.92 245.43 L549.32 247.11 L548.72 248.78 L548.11 250.42 L547.51 252.03 L546.91 253.61 L546.31 255.16 L545.70 256.67 L545.10 258.14 L544.50 259.57 L543.89 260.95 L543.28 262.29 L542.68 263.58 L542.07 264.81 L541.46 265.99 L540.85 267.11 L540.24 268.18 L539.64 269.19 L539.03 270.15 L538.42 271.05 L537.82 271.93 L537.26 272.79 L536.67 273.60 L536.06 274.38 L535.43 275.12 L534.95 276.09 L534.26 276.79 L533.42 277.15 L532.73 277.94 L531.85 278.14 L530.96 278.38 L530.13 277.81 L529.21 277.88 L528.46 277.22 L527.69 276.69 L527.06 275.88 L526.48 275.05 L525.89 274.26 L525.37 273.38 L524.74 272.60 L524.19 271.72 L523.58 270.85 L522.97 269.93 L522.37 268.96 L521.76 267.93 L521.15 266.85 L520.54 265.72 L519.93 264.53 L519.32 263.28 L518.71 261.98 L518.11 260.64 L517.50 259.24 L516.90 257.80 L516.30 256.32 L515.69 254.80 L515.09 253.25 L514.49 251.66 L513.89 250.04 L513.28 248.39 L512.68 246.72 L512.08 245.03 L511.48 243.32 L510.88 241.60 L510.28 239.87 L509.68 238.13 L509.08 236.38 L508.48 234.64 L507.88 232.90 L507.28 231.16 L506.68 229.44 L506.08 227.73 L505.48 226.03 L504.88 224.36 L504.28 222.71 L503.69 221.08 L503.09 219.49 L502.49 217.93 L501.89 216.40 L501.30 214.92 L500.70 213.47 L500.11 212.08 L499.51 210.73 L498.92 209.43 L498.32 208.19 L497.73 207.00 L497.14 205.87 L496.55 204.81 L495.96 203.81 L495.37 202.88 L494.77 202.02 L494.18 201.23 L493.57 200.54 L492.97 199.94 L492.35 199.45 L491.70 199.09 L491.09 198.84 L490.56 198.60 L490.04 198.50 L489.58 198.48 L489.15 198.59 L488.84 198.37 L488.51 198.84 L488.22 198.87 L487.73 198.36 L487.29 198.41 L486.78 198.49 L486.22 198.64 L485.62 198.90 L485.10 199.36 L484.45 199.79 L483.83 200.36 L483.23 201.02 L482.62 201.77 L482.03 202.61 L481.44 203.52 L480.85 204.50 L480.26 205.55 L479.67 206.65 L479.07 207.82 L478.48 209.05 L477.89 210.33 L477.29 211.67 L476.70 213.05 L476.10 214.48 L475.51 215.95 L474.91 217.47 L474.31 219.02 L473.71 220.60 L473.12 222.22 L472.52 223.86 L471.92 225.53 L471.32 227.22 L470.72 228.92 L470.12 230.64 L469.52 232.38 L468.92 234.12 L468.32 235.86 L467.72 237.60 L467.12 239.34 L466.52 241.08 L465.92 242.81 L465.32 244.52 L464.72 246.22 L464.12 247.89 L463.52 249.55 L462.91 251.17 L462.31 252.77 L461.71 254.34 L461.11 255.87 L460.50 257.36 L459.90 258.82 L459.29 260.22 L458.69 261.58 L458.08 262.90 L457.47 264.16 L456.87 265.37 L456.26 266.52 L455.65 267.61 L455.04 268.66 L454.43 269.64 L453.83 270.58 L453.24 271.48 L452.63 272.33 L452.08 273.19 L451.51 274.02 L450.95 274.85 L450.21 275.45 L449.59 276.21 L449.04 277.17 L448.20 277.53 L447.38 277.95 L446.52 278.16 L445.64 278.09 L444.80 277.81 L443.91 277.63 L443.25 276.81 L442.60 276.09 L441.93 275.40 L441.28 274.69 L440.72 273.86 L440.13 273.04 L439.58 272.18 L438.98 271.32 L438.37 270.43 L437.77 269.48 L437.16 268.48 L436.55 267.44 L435.94 266.33 L435.33 265.17 L434.72 263.95 L434.12 262.68 L433.51 261.36 L432.91 259.99 L432.30 258.58 L431.70 257.12 L431.09 255.62 L430.49 254.08 L429.89 252.51 L429.29 250.91 L428.68 249.27 L428.08 247.61 L427.48 245.93 L426.88 244.23 L426.28 242.52 L425.68 240.79 L425.08 239.06 L424.48 237.31 L423.88 235.57 L423.28 233.82 L422.68 232.09 L422.08 230.36 L421.48 228.64 L420.88 226.93 L420.28 225.25 L419.68 223.58 L419.08 221.94 L418.49 220.33 L417.89 218.75 L417.29 217.21 L416.70 215.70 L416.10 214.24 L415.50 212.82 L414.91 211.44 L414.31 210.12 L413.72 208.84 L413.13 207.63 L412.54 206.47 L411.94 205.37 L411.35 204.33 L410.76 203.36 L410.17 202.47 L409.58 201.64 L408.97 200.91 L408.36 200.26 L407.78 199.68 L407.12 199.28 L406.52 198.92 L406.00 198.60 L405.35 198.62 L404.86 198.57 L404.37 198.82 L404.09 198.49 L403.75 198.47 L403.44 198.75 L403.08 198.55 L402.68 198.57 L402.29 198.74 L401.69 198.70 L401.10 198.86 L400.49 199.15 L399.88 199.55 L399.25 200.05 L398.63 200.66 L398.02 201.36 L397.43 202.16 L396.84 203.03 L396.24 203.97 L395.65 204.98 L395.06 206.06 L394.47 207.19 L393.88 208.39 L393.28 209.64 L392.69 210.95 L392.10 212.31 L391.50 213.71 L390.90 215.16 L390.31 216.65 L389.71 218.18 L389.11 219.75 L388.51 221.35 L387.92 222.98 L387.32 224.63 L386.72 226.31 L386.12 228.01 L385.52 229.72 L384.92 231.45 L384.32 233.19 L383.72 234.93 L383.12 236.67 L382.52 238.42 L381.92 240.16 L381.32 241.89 L380.72 243.61 L380.12 245.31 L379.52 247.00 L378.92 248.67 L378.31 250.31 L377.71 251.92 L377.11 253.51 L376.51 255.06 L375.90 256.57 L375.30 258.05 L374.70 259.48 L374.09 260.86 L373.49 262.20 L372.88 263.49 L372.27 264.73 L371.66 265.91 L371.05 267.04 L370.45 268.11 L369.84 269.12 L369.23 270.09 L368.63 271.00 L368.03 271.88 L367.43 272.71 L366.85 273.54 L366.28 274.36 L365.66 275.11 L365.10 275.96 L364.41 276.63 L363.78 277.50 L362.88 277.65 L362.04 277.91 L361.19 277.98 L360.28 278.32 L359.40 277.98 L358.69 277.21 L357.92 276.68 L357.34 275.82 L356.65 275.15 L356.10 274.30 L355.51 273.49 L354.95 272.65 L354.37 271.79 L353.77 270.92 L353.18 269.99 L352.57 269.02 L351.95 268.00 L351.35 266.93 L350.74 265.79 L350.13 264.61 L349.52 263.36 L348.91 262.07 L348.31 260.73 L347.70 259.34 L347.10 257.90 L346.50 256.42 L345.89 254.91 L345.29 253.35 L344.69 251.76 L344.09 250.15 L343.48 248.50 L342.88 246.83 L342.28 245.14 L341.68 243.44 L341.08 241.71 L340.48 239.98 L339.88 238.24 L339.28 236.50 L338.68 234.75 L338.08 233.01 Z" fill="#ffe600"/></g>
<rect x="329.2" y="229.6" width="9.6" height="16" rx="1" fill="#8a8a08" stroke="#c4c41c" stroke-width="0.8"/>
<path d="M334.4 225.4 h4.6 M336.7 225.4 v4.5" stroke="#e4e440" stroke-width="0.9" fill="none"/>
<path d="M331 233 h1.6 v7 M332.6 236.3 h3 M335.6 234 l2.6 2.3 l-2.6 2.3 z M331.3 241 h5 l-2.5 2.6 z" stroke="#eeee40" stroke-width="0.8" fill="#eeee40"/>
<path d="M333 392.4 h2.8 M333.3 392.4 v4.8" stroke="#1cc81c" stroke-width="0.9" fill="none"/>
<path d="M335.6 388.8 l3.3 3.3 l-3.3 3.3 z" fill="#22dd22"/>
<path d="M330.6 397 h5.8 l-2.9 3.6 z" fill="#1cc81c"/>
<text x="341.4" y="393.30" font-family="Liberation Sans, sans-serif" font-size="6.6" letter-spacing="1.05" fill="#6a5c00" fill-opacity="0.55">−19.8</text>
<rect x="766" y="156" width="91.8" height="317.4" fill="#262626"/><rect x="766" y="472.6" width="91.8" height="0.9" fill="#3a3a3a"/><rect x="857" y="175" width="0.8" height="298" fill="#333"/>
<rect x="766.4" y="156" width="1.2" height="317.4" fill="#4a4a4a"/>
<path d="M766.9 174.6 V157.6 q0 -1.4 1.4 -1.4 H833 q1.4 0 1.4 1.4 V174.6" fill="#2b2b2b" stroke="#565656" stroke-width="1"/>
<rect x="834.9" y="174.1" width="23" height="1" fill="#565656"/>
<defs><clipPath id="cb2"><path d="M836.6 174.2 V158.4 q0 -2 2 -2 H855.8 q2 0 2 2 V174.2 z"/></clipPath></defs>
<g clip-path="url(#cb2)"><rect x="836" y="156" width="23" height="9.4" fill="#0434a4"/><rect x="836" y="165.4" width="23" height="9.2" fill="#023272"/></g>
<rect x="843.2" y="160.6" width="7.6" height="9.4" fill="none" stroke="#eef2ff" stroke-width="1"/>
<rect x="844.8" y="162.8" width="4.4" height="0.8" fill="#eef2ff"/>
<rect x="844.8" y="164.9" width="4.4" height="0.8" fill="#eef2ff"/>
<rect x="844.8" y="167" width="4.4" height="0.8" fill="#eef2ff"/>
<rect x="769.6" y="161.6" width="1" height="1" fill="#b4b4b4"/>
<rect x="771.7" y="161.6" width="1" height="1" fill="#b4b4b4"/>
<rect x="769.6" y="163.7" width="1" height="1" fill="#b4b4b4"/>
<rect x="771.7" y="163.7" width="1" height="1" fill="#b4b4b4"/>
<rect x="769.6" y="165.79999999999998" width="1" height="1" fill="#b4b4b4"/>
<rect x="771.7" y="165.79999999999998" width="1" height="1" fill="#b4b4b4"/>
<rect x="828.8" y="161.6" width="1" height="1" fill="#b4b4b4"/>
<rect x="830.9" y="161.6" width="1" height="1" fill="#b4b4b4"/>
<rect x="828.8" y="163.7" width="1" height="1" fill="#b4b4b4"/>
<rect x="830.9" y="163.7" width="1" height="1" fill="#b4b4b4"/>
<rect x="828.8" y="165.79999999999998" width="1" height="1" fill="#b4b4b4"/>
<rect x="830.9" y="165.79999999999998" width="1" height="1" fill="#b4b4b4"/>
<rect x="769.4" y="204.6" width="84.8" height="1" fill="#474747"/>
<rect x="769.4" y="230.6" width="84.8" height="1" fill="#474747"/>
<rect x="769.4" y="257" width="84.8" height="1" fill="#474747"/>
<rect x="769.4" y="283.4" width="84.8" height="1" fill="#474747"/>
<rect x="769.4" y="310.2" width="84.8" height="1" fill="#474747"/>
<path d="M807.6 296.4 h7 M811.1 292.9 v7" stroke="#f4f4f4" stroke-width="1.8"/>
<rect x="331" y="487.2" width="13" height="24.8" rx="3" fill="#353535" stroke="#444" stroke-width="0.8"/>
<path d="M337.5 494.6 l3.4 3.8 h-2 v3.6 h-2.8 v-3.6 h-2 z" fill="#fff"/>
<defs><clipPath id="k346"><rect x="346" y="487.2" width="83.39999999999998" height="24.80000000000001" rx="3.2"/></clipPath></defs>
<g clip-path="url(#k346)"><rect x="346" y="487.2" width="83.39999999999998" height="24.80000000000001" fill="#383838"/><ellipse cx="387.7" cy="485.2" rx="51.707999999999984" ry="15" fill="#454545"/></g>
<rect x="346.4" y="487.59999999999997" width="82.59999999999998" height="24.00000000000001" rx="3" fill="none" stroke="#404040" stroke-width="0.8"/>
<defs><clipPath id="k431"><rect x="431.4" y="487.2" width="83.0" height="24.80000000000001" rx="3.2"/></clipPath></defs>
<g clip-path="url(#k431)"><rect x="431.4" y="487.2" width="83.0" height="24.80000000000001" fill="#383838"/><ellipse cx="472.9" cy="485.2" rx="51.46" ry="15" fill="#454545"/></g>
<rect x="431.79999999999995" y="487.59999999999997" width="82.2" height="24.00000000000001" rx="3" fill="none" stroke="#404040" stroke-width="0.8"/>
<defs><clipPath id="k516"><rect x="516.6" y="487.2" width="83.39999999999998" height="24.80000000000001" rx="3.2"/></clipPath></defs>
<g clip-path="url(#k516)"><rect x="516.6" y="487.2" width="83.39999999999998" height="24.80000000000001" fill="#097309"/><ellipse cx="558.3" cy="485.2" rx="51.707999999999984" ry="15" fill="#0d8a0d"/></g>
<rect x="517.0" y="487.59999999999997" width="82.59999999999998" height="24.00000000000001" rx="3" fill="none" stroke="#12a212" stroke-width="0.8"/>
<defs><clipPath id="k602"><rect x="602" y="487.2" width="83.60000000000002" height="24.80000000000001" rx="3.2"/></clipPath></defs>
<g clip-path="url(#k602)"><rect x="602" y="487.2" width="83.60000000000002" height="24.80000000000001" fill="#383838"/><ellipse cx="643.8" cy="485.2" rx="51.832000000000015" ry="15" fill="#454545"/></g>
<rect x="602.4" y="487.59999999999997" width="82.80000000000003" height="24.00000000000001" rx="3" fill="none" stroke="#404040" stroke-width="0.8"/>
<rect x="468.4" y="501.4" width="8.4" height="8.4" fill="#262626" stroke="#5a5a5a" stroke-width="0.8"/>
<path d="M521.9 495.8 a3.9 3.9 0 1 0 2.2 -4.6" fill="none" stroke="#1f9a1f" stroke-width="2.1"/><path d="M522.3 489.0 v4.2 h4.2 z" fill="#1f9a1f"/>
<path d="M606.9 495.8 a3.9 3.9 0 1 0 2.2 -4.6" fill="none" stroke="#5a5a5a" stroke-width="2.1"/><path d="M607.3 489.0 v4.2 h4.2 z" fill="#5a5a5a"/>
</svg>
<div class="t" style="left:364.5px;top:130.10px;font-size:9.6px;color:#e6e632;transform:translateX(-50%) scaleX(0.9);transform-origin:50% 50%;">1</div>
<div class="t" style="left:397px;top:123.30px;font-size:9.4px;color:#e4e4e4;transform:translateX(-50%) scaleX(0.9);transform-origin:50% 50%;">5.00V/</div>
<div class="t" style="left:397px;top:137.80px;font-size:9.4px;color:#e4e4e4;transform:translateX(-50%) scaleX(0.9);transform-origin:50% 50%;">-9.93750V</div>
<div class="t" style="left:429.3px;top:130.10px;font-size:9.6px;color:#38e038;transform:translateX(-50%) scaleX(0.9);transform-origin:50% 50%;">2</div>
<div class="t" style="left:461px;top:123.30px;font-size:9.4px;color:#e4e4e4;transform:translateX(-50%) scaleX(0.9);transform-origin:50% 50%;">2.00V/</div>
<div class="t" style="left:461px;top:137.80px;font-size:9.4px;color:#e4e4e4;transform:translateX(-50%) scaleX(0.9);transform-origin:50% 50%;">3.92500V</div>
<div class="t" style="left:494.1px;top:130.10px;font-size:9.6px;color:#2a50c8;transform:translateX(-50%) scaleX(0.9);transform-origin:50% 50%;">3</div>
<div class="t" style="left:559.4px;top:130.10px;font-size:9.6px;color:#d8108c;transform:translateX(-50%) scaleX(0.9);transform-origin:50% 50%;">4</div>
<div class="t" style="left:624.9px;top:130.10px;font-size:9.6px;color:#f0f0f0;transform:translateX(-50%) scaleX(0.9);transform-origin:50% 50%;">H</div>
<div class="t" style="left:653px;top:123.30px;font-size:9.4px;color:#e4e4e4;transform:translateX(-50%) scaleX(0.9);transform-origin:50% 50%;">100.0us/</div>
<div class="t" style="left:652.5px;top:137.80px;font-size:9.4px;color:#e4e4e4;transform:translateX(-50%) scaleX(0.9);transform-origin:50% 50%;">0.0s</div>
<div class="t" style="left:725.2px;top:130.10px;font-size:9.6px;color:#d8d840;transform:translateX(-50%) scaleX(0.9);transform-origin:50% 50%;">T</div>
<div class="t" style="left:765px;top:123.30px;font-size:9.4px;color:#e6e632;transform:translateX(-50%) scaleX(0.9);transform-origin:50% 50%;">1</div>
<div class="t" style="left:796px;top:123.30px;font-size:9.4px;color:#e4e4e4;transform:translateX(-50%) scaleX(0.9);transform-origin:50% 50%;">-33.3mV</div>
<div class="t" style="left:760.5px;top:137.80px;font-size:9.4px;color:#e4e4e4;transform:translateX(-50%) scaleX(0.9);transform-origin:50% 50%;">Trig'd</div>
<div class="t" style="left:328.6px;top:387.40px;font-size:10.2px;color:#22d822;transform:scaleX(0.68);transform-origin:0 50%;">2</div>
<div class="t" style="left:800.5px;top:160.10px;font-size:9.4px;color:#cfcfcf;transform:translateX(-50%) scaleX(0.9);transform-origin:50% 50%;">Meas</div>
<div class="t" style="left:769.4px;top:180.00px;font-size:9.4px;color:#e4e4e4;transform:scaleX(0.9);transform-origin:0 50%;">Min(<span style="color:#e6e632">1</span>):</div>
<div class="t" style="left:853.8px;top:192.60px;font-size:9.4px;color:#e4e4e4;transform:translateX(-100%) scaleX(0.9);transform-origin:100% 50%;">-5.3V</div>
<div class="t" style="left:769.4px;top:206.30px;font-size:9.4px;color:#e4e4e4;transform:scaleX(0.9);transform-origin:0 50%;">Max(<span style="color:#e6e632">1</span>):</div>
<div class="t" style="left:853.8px;top:219.30px;font-size:9.4px;color:#e4e4e4;transform:translateX(-100%) scaleX(0.9);transform-origin:100% 50%;">5.1V</div>
<div class="t" style="left:769.4px;top:232.80px;font-size:9.4px;color:#e4e4e4;transform:scaleX(0.9);transform-origin:0 50%;">Pk-Pk(<span style="color:#e6e632">1</span>):</div>
<div class="t" style="left:853.8px;top:245.60px;font-size:9.4px;color:#e4e4e4;transform:translateX(-100%) scaleX(0.9);transform-origin:100% 50%;">10.4V</div>
<div class="t" style="left:769.4px;top:259.30px;font-size:9.4px;color:#d8801c;transform:scaleX(0.9);transform-origin:0 50%;">Freq(<span style="color:#e6e632">1</span>):</div>
<div class="t" style="left:853.8px;top:272.30px;font-size:9.4px;color:#d8801c;transform:translateX(-100%) scaleX(0.9);transform-origin:100% 50%;">4.9916kHz</div>
<div class="t" style="left:331px;top:475.30px;font-size:9.8px;color:#e4e4e4;transform:scaleX(0.9);transform-origin:0 50%;">Autoscale Menu</div>
<div class="t" style="left:387.6px;top:489.30px;font-size:9.4px;color:#e4e4e4;transform:translateX(-50%) scaleX(0.9);transform-origin:50% 50%;">Undo</div>
<div class="t" style="left:387.6px;top:501.20px;font-size:9.4px;color:#e4e4e4;transform:translateX(-50%) scaleX(0.9);transform-origin:50% 50%;">Autoscale</div>
<div class="t" style="left:472.9px;top:489.30px;font-size:9.4px;color:#e4e4e4;transform:translateX(-50%) scaleX(0.9);transform-origin:50% 50%;">Fast Debug</div>
<div class="t" style="left:558.3px;top:489.30px;font-size:9.4px;color:#f0fff0;transform:translateX(-50%) scaleX(0.9);transform-origin:50% 50%;">Channels</div>
<div class="t" style="left:558.3px;top:501.20px;font-size:9.4px;color:#f0fff0;transform:translateX(-50%) scaleX(0.9);transform-origin:50% 50%;">All</div>
<div class="t" style="left:643.6px;top:489.30px;font-size:9.4px;color:#e4e4e4;transform:translateX(-50%) scaleX(0.9);transform-origin:50% 50%;">Acq Mode</div>
<div class="t" style="left:643.8px;top:501.20px;font-size:9.4px;color:#e4e4e4;transform:translateX(-50%) scaleX(0.9);transform-origin:50% 50%;">Normal</div>
<svg width="1015" height="656" viewBox="0 0 1015 656" style="z-index:50">
<rect x="325.6" y="116.5" width="535.5" height="399.40000000000003" fill="none" stroke="#fdc00b" stroke-width="3.2"/>
<rect x="102.55" y="292.85" width="195.1" height="195.70000000000002" fill="none" stroke="#fdc00b" stroke-width="3.1"/>
<rect x="102.55" y="166.55" width="195.1" height="111.29999999999998" fill="none" stroke="#fdc00b" stroke-width="3.1"/>
<rect x="50" y="389" width="52" height="4" fill="#fdc00b"/>
<rect x="50" y="219.7" width="52" height="3.9" fill="#fdc00b"/>
<rect x="50" y="145.6" width="98" height="4.2" fill="#fdc00b"/>
<circle cx="148" cy="147.8" r="7.2" fill="#fdc00b"/>
<rect x="848" y="69" width="76" height="4.3" fill="#fdc00b"/>
<rect x="885" y="23" width="4.3" height="47" fill="#fdc00b"/>
<rect x="885" y="23" width="81" height="4.8" fill="#fdc00b"/>
<rect x="922.6" y="112" width="4.4" height="63" fill="#fdc00b"/>
<rect x="926" y="140" width="40" height="4.6" fill="#fdc00b"/>
<rect x="789.3" y="574.3" width="90.2" height="3.5" fill="#fdc00b"/>
<rect x="834.3" y="577" width="4.6" height="47" fill="#fdc00b"/>
<rect x="760" y="619.6" width="78.9" height="4.4" fill="#fdc00b"/>
<circle cx="595" cy="314.2" r="26.3" fill="#fff"/>
<circle cx="595" cy="314.2" r="23.6" fill="#fdc00b"/>
<path transform="translate(582.23 324.8) scale(0.0153 -0.01382)" d="M1070 0H789V1059Q635 915 426 846V1101Q536 1137 665 1237.5Q794 1338 842 1472H1070Z" fill="#050505"/>
<ellipse cx="25.2" cy="390.5" rx="24.2" ry="26.4" fill="#fdc00b"/>
<text transform="translate(25.2 400.7) scale(1 1.05)" x="0" y="0" text-anchor="middle" font-family="Liberation Sans, sans-serif" font-weight="bold" font-size="28.6" fill="#050505">2</text>
<ellipse cx="26.5" cy="222.2" rx="25.8" ry="25.8" fill="#fdc00b"/>
<text transform="translate(26.5 232.39999999999998) scale(1 1.05)" x="0" y="0" text-anchor="middle" font-family="Liberation Sans, sans-serif" font-weight="bold" font-size="28.6" fill="#050505">3</text>
<ellipse cx="26.6" cy="148" rx="25.8" ry="25.8" fill="#fdc00b"/>
<text transform="translate(26.6 158.2) scale(1 1.05)" x="0" y="0" text-anchor="middle" font-family="Liberation Sans, sans-serif" font-weight="bold" font-size="28.6" fill="#050505">4</text>
<ellipse cx="990" cy="26" rx="25.8" ry="25.8" fill="#fdc00b"/>
<text transform="translate(990 36.2) scale(1 1.05)" x="0" y="0" text-anchor="middle" font-family="Liberation Sans, sans-serif" font-weight="bold" font-size="28.6" fill="#050505">5</text>
<ellipse cx="990" cy="143.2" rx="25.8" ry="25.8" fill="#fdc00b"/>
<text transform="translate(990 153.39999999999998) scale(1 1.05)" x="0" y="0" text-anchor="middle" font-family="Liberation Sans, sans-serif" font-weight="bold" font-size="28.6" fill="#050505">6</text>
<ellipse cx="738" cy="622" rx="25.8" ry="25.8" fill="#fdc00b"/>
<text transform="translate(738 632.2) scale(1 1.05)" x="0" y="0" text-anchor="middle" font-family="Liberation Sans, sans-serif" font-weight="bold" font-size="28.6" fill="#050505">7</text>
</svg>
</div></body></html>
